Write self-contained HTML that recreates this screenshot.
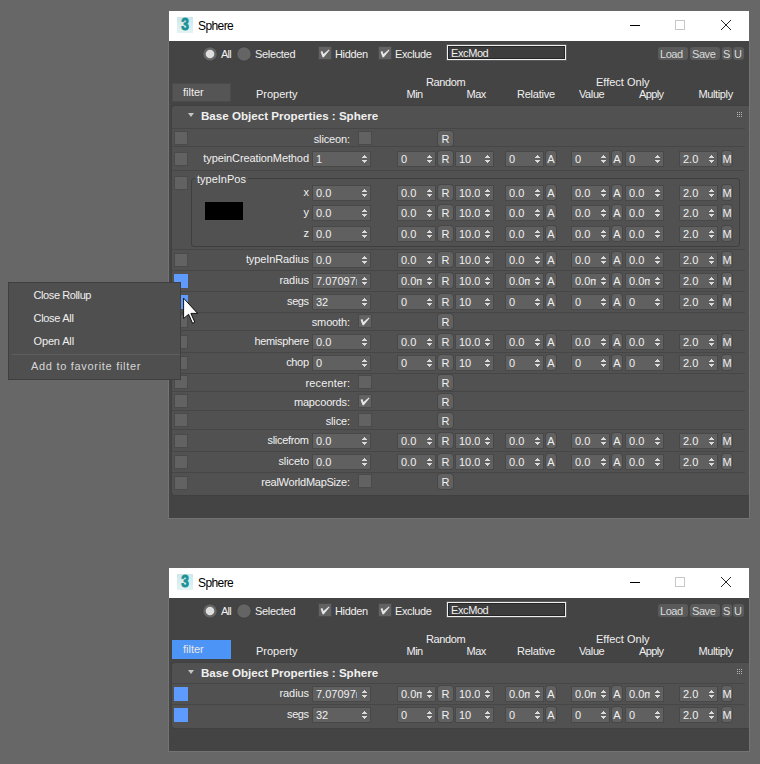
<!DOCTYPE html>
<html><head><meta charset="utf-8"><style>
html,body{margin:0;padding:0;}
body{width:760px;height:764px;overflow:hidden;background:#676767;position:relative;font-family:"Liberation Sans", sans-serif;}
body>div,body>svg{position:absolute;}
.t{white-space:nowrap;line-height:20px;height:20px;}
</style></head><body>
<div style="left:168px;top:41px;width:582px;height:478px;background:#737373"></div>
<div style="left:169px;top:11px;width:580px;height:30px;background:#fff"></div>
<div style="left:169px;top:41px;width:580px;height:477px;background:#444444"></div>
<svg style="left:177px;top:17px" width="16" height="16"><defs><linearGradient id="g0" x1="0" y1="0" x2="0" y2="1"><stop offset="0" stop-color="#cde8ea"/><stop offset="1" stop-color="#e4f3f4"/></linearGradient></defs><rect width="16" height="16" fill="url(#g0)"/><text x="0" y="0" transform="translate(8.1 12.7) scale(0.86 1)" font-family="Liberation Sans" font-weight="700" font-size="16" fill="#1b9197" stroke="#1b9197" stroke-width="0.9" text-anchor="middle">3</text></svg>
<div class="t" style="left:198px;top:15.84px;font-size:12px;color:#000;font-weight:400;;letter-spacing:-0.6px">Sphere</div>
<div style="left:630px;top:25px;width:10px;height:1px;background:#000"></div>
<div style="left:675px;top:20px;width:10px;height:10px;box-shadow:inset 0 0 0 1px #c8c8c8"></div>
<svg style="left:720px;top:19px" width="12" height="12"><path d="M1 1 L11 11 M11 1 L1 11" stroke="#000" stroke-width="0.85"/></svg>
<svg style="left:202px;top:46px" width="16" height="16"><circle cx="8" cy="8" r="7.5" fill="#3e3e3e"/><circle cx="8" cy="8" r="6.8" fill="#646464"/><circle cx="8" cy="8" r="4.3" fill="#dedede"/></svg>
<div class="t" style="left:221px;top:44.19px;font-size:11px;color:#f0f0f0;font-weight:400;;letter-spacing:-0.8px">All</div>
<svg style="left:236px;top:46px" width="16" height="16"><circle cx="8" cy="8" r="7.5" fill="#3e3e3e"/><circle cx="8" cy="8" r="6.8" fill="#646464"/></svg>
<div class="t" style="left:255px;top:44.19px;font-size:11px;color:#f0f0f0;font-weight:400;;letter-spacing:-0.33px">Selected</div>
<div style="left:319px;top:47px;width:12px;height:12px;background:#626262;box-shadow:0 0 0 1px #4a4a4a"></div>
<svg style="left:319px;top:47px" width="12" height="12"><path d="M1.6 4.8 L3.4 3.9 L4.5 7.0 L9.8 2.4 L10.5 3.2 L4.8 10.2 L3.5 10.3 Z" fill="#e6e6e6"/></svg>
<div class="t" style="left:335px;top:44.19px;font-size:11px;color:#f0f0f0;font-weight:400;;letter-spacing:-0.37px">Hidden</div>
<div style="left:379px;top:47px;width:12px;height:12px;background:#626262;box-shadow:0 0 0 1px #4a4a4a"></div>
<svg style="left:379px;top:47px" width="12" height="12"><path d="M1.6 4.8 L3.4 3.9 L4.5 7.0 L9.8 2.4 L10.5 3.2 L4.8 10.2 L3.5 10.3 Z" fill="#e6e6e6"/></svg>
<div class="t" style="left:395px;top:44.19px;font-size:11px;color:#f0f0f0;font-weight:400;;letter-spacing:-0.37px">Exclude</div>
<div style="left:446px;top:44px;width:121px;height:17px;background:#5a5a5a"></div>
<div style="left:447px;top:45px;width:119px;height:15px;background:#f0f0f0"></div>
<div style="left:448px;top:46px;width:117px;height:13px;background:#262626"></div>
<div style="left:449px;top:47px;width:115px;height:11px;background:#3d3d3d"></div>
<div class="t" style="left:451px;top:43.19px;font-size:11px;color:#f0f0f0;font-weight:400;;letter-spacing:-0.4px">ExcMod</div>
<div style="left:658px;top:47px;width:30px;height:13px;background:#5a5a5a;border-radius:3px"></div>
<div class="t" style="left:660px;top:44.19px;font-size:11px;color:#dadada;font-weight:400;;letter-spacing:-0.45px">Load</div>
<div style="left:690px;top:47px;width:30px;height:13px;background:#5a5a5a;border-radius:3px"></div>
<div class="t" style="left:692px;top:44.19px;font-size:11px;color:#dadada;font-weight:400;;letter-spacing:-0.43px">Save</div>
<div style="left:722px;top:47px;width:10px;height:13px;background:#5a5a5a;border-radius:3px"></div>
<div class="t" style="left:723px;top:44.19px;font-size:11px;color:#dadada;font-weight:400;">S</div>
<div style="left:733px;top:47px;width:11px;height:13px;background:#5a5a5a;border-radius:3px"></div>
<div class="t" style="left:734px;top:44.19px;font-size:11px;color:#dadada;font-weight:400;">U</div>
<div style="left:172px;top:83px;width:59px;height:19px;background:#555555;box-shadow:inset 0 0 0 1px #4b4b4b"></div>
<div class="t" style="left:183px;top:82.19px;font-size:11px;color:#f0f0f0;font-weight:400;">filter</div>
<div class="t" style="left:256px;top:84.19px;font-size:11px;color:#f0f0f0;font-weight:400;">Property</div>
<div class="t" style="left:426px;top:72.19px;font-size:11px;color:#f0f0f0;font-weight:400;;letter-spacing:-0.4px">Random</div>
<div class="t" style="left:406.5px;top:84.19px;font-size:11px;color:#f0f0f0;font-weight:400;;letter-spacing:-0.5px">Min</div>
<div class="t" style="left:466.5px;top:84.19px;font-size:11px;color:#f0f0f0;font-weight:400;;letter-spacing:-0.5px">Max</div>
<div class="t" style="left:517px;top:84.19px;font-size:11px;color:#f0f0f0;font-weight:400;;letter-spacing:-0.23px">Relative</div>
<div class="t" style="left:596px;top:72.19px;font-size:11px;color:#f0f0f0;font-weight:400;">Effect Only</div>
<div class="t" style="left:579px;top:84.19px;font-size:11px;color:#f0f0f0;font-weight:400;;letter-spacing:-0.4px">Value</div>
<div class="t" style="left:639px;top:84.19px;font-size:11px;color:#f0f0f0;font-weight:400;;letter-spacing:-0.6px">Apply</div>
<div class="t" style="left:698.5px;top:84.19px;font-size:11px;color:#f0f0f0;font-weight:400;;letter-spacing:-0.38px">Multiply</div>
<div style="left:171px;top:105px;width:578px;height:391px;background:#404040;border-radius:4px 0 0 4px"></div>
<div style="left:172px;top:106px;width:577px;height:389px;background:#515151;border-radius:3px 0 0 3px"></div>
<svg style="left:187px;top:112px" width="9" height="7"><path d="M1 1 L7 1 L4 5 Z" fill="#c4c4c4"/></svg>
<div class="t" style="left:201px;top:105.98px;font-size:11.6px;color:#f0f0f0;font-weight:700;">Base Object Properties : Sphere</div>
<div style="left:737px;top:112px;width:1px;height:1px;background:#b4b4b4"></div>
<div style="left:737px;top:114px;width:1px;height:1px;background:#b4b4b4"></div>
<div style="left:737px;top:116px;width:1px;height:1px;background:#b4b4b4"></div>
<div style="left:739px;top:112px;width:1px;height:1px;background:#b4b4b4"></div>
<div style="left:739px;top:114px;width:1px;height:1px;background:#b4b4b4"></div>
<div style="left:739px;top:116px;width:1px;height:1px;background:#b4b4b4"></div>
<div style="left:741px;top:112px;width:1px;height:1px;background:#b4b4b4"></div>
<div style="left:741px;top:114px;width:1px;height:1px;background:#b4b4b4"></div>
<div style="left:741px;top:116px;width:1px;height:1px;background:#b4b4b4"></div>
<div style="left:172px;top:128px;width:573px;height:1px;background:#464646"></div>
<div style="left:172px;top:146px;width:573px;height:1px;background:#464646"></div>
<div style="left:172px;top:170px;width:573px;height:1px;background:#464646"></div>
<div style="left:172px;top:249px;width:573px;height:1px;background:#464646"></div>
<div style="left:172px;top:270px;width:573px;height:1px;background:#464646"></div>
<div style="left:172px;top:291px;width:573px;height:1px;background:#464646"></div>
<div style="left:172px;top:312px;width:573px;height:1px;background:#464646"></div>
<div style="left:172px;top:330px;width:573px;height:1px;background:#464646"></div>
<div style="left:172px;top:352px;width:573px;height:1px;background:#464646"></div>
<div style="left:172px;top:373px;width:573px;height:1px;background:#464646"></div>
<div style="left:172px;top:391px;width:573px;height:1px;background:#464646"></div>
<div style="left:172px;top:410px;width:573px;height:1px;background:#464646"></div>
<div style="left:172px;top:429px;width:573px;height:1px;background:#464646"></div>
<div style="left:172px;top:451px;width:573px;height:1px;background:#464646"></div>
<div style="left:172px;top:472px;width:573px;height:1px;background:#464646"></div>
<div style="left:175px;top:132px;width:12px;height:12px;background:#626262;box-shadow:0 0 0 1px #4a4a4a"></div>
<div class="t" style="right:410.15px;top:129.19px;font-size:11px;color:#f0f0f0;font-weight:400;;letter-spacing:-0.15px">sliceon:</div>
<div style="left:359px;top:132px;width:12px;height:12px;background:#626262;box-shadow:0 0 0 1px #4a4a4a"></div>
<div style="left:438px;top:131px;width:15px;height:15px;background:#616161;border-radius:3px;box-shadow:0 0 0 1px #474747"></div>
<div class="t" style="left:438px;top:129.19px;font-size:11px;color:#f0f0f0;font-weight:400;width:15px;text-align:center;text-indent:0px">R</div>
<div style="left:175px;top:153px;width:12px;height:12px;background:#626262;box-shadow:0 0 0 1px #4a4a4a"></div>
<div class="t" style="right:451.1px;top:148.19px;font-size:11px;color:#f0f0f0;font-weight:400;;letter-spacing:-0.1px">typeinCreationMethod</div>
<div style="left:313px;top:152px;width:57px;height:14px;background:#606060;box-shadow:0 0 0 1px #484848"></div>
<div class="t" style="left:316px;top:149.19px;font-size:11px;color:#f0f0f0;font-weight:400;width:41px;overflow:hidden">1</div>
<svg style="left:362px;top:155px" width="5" height="8" shape-rendering="crispEdges"><rect x="2" y="0" width="1" height="1" fill="#dadada"/><rect x="1" y="1" width="3" height="1" fill="#dadada"/><rect x="0" y="2" width="5" height="1" fill="#dadada"/><rect x="0" y="5" width="5" height="1" fill="#dadada"/><rect x="1" y="6" width="3" height="1" fill="#dadada"/><rect x="2" y="7" width="1" height="1" fill="#dadada"/></svg>
<div style="left:398px;top:152px;width:37px;height:14px;background:#606060;box-shadow:0 0 0 1px #484848"></div>
<div class="t" style="left:401px;top:149.19px;font-size:11px;color:#f0f0f0;font-weight:400;width:21px;overflow:hidden">0</div>
<svg style="left:427px;top:155px" width="5" height="8" shape-rendering="crispEdges"><rect x="2" y="0" width="1" height="1" fill="#dadada"/><rect x="1" y="1" width="3" height="1" fill="#dadada"/><rect x="0" y="2" width="5" height="1" fill="#dadada"/><rect x="0" y="5" width="5" height="1" fill="#dadada"/><rect x="1" y="6" width="3" height="1" fill="#dadada"/><rect x="2" y="7" width="1" height="1" fill="#dadada"/></svg>
<div style="left:438px;top:151px;width:15px;height:15px;background:#616161;border-radius:3px;box-shadow:0 0 0 1px #474747"></div>
<div class="t" style="left:438px;top:149.19px;font-size:11px;color:#f0f0f0;font-weight:400;width:15px;text-align:center;text-indent:0px">R</div>
<div style="left:456px;top:152px;width:37px;height:14px;background:#606060;box-shadow:0 0 0 1px #484848"></div>
<div class="t" style="left:459px;top:149.19px;font-size:11px;color:#f0f0f0;font-weight:400;width:21px;overflow:hidden">10</div>
<svg style="left:485px;top:155px" width="5" height="8" shape-rendering="crispEdges"><rect x="2" y="0" width="1" height="1" fill="#dadada"/><rect x="1" y="1" width="3" height="1" fill="#dadada"/><rect x="0" y="2" width="5" height="1" fill="#dadada"/><rect x="0" y="5" width="5" height="1" fill="#dadada"/><rect x="1" y="6" width="3" height="1" fill="#dadada"/><rect x="2" y="7" width="1" height="1" fill="#dadada"/></svg>
<div style="left:506px;top:152px;width:37px;height:14px;background:#606060;box-shadow:0 0 0 1px #484848"></div>
<div class="t" style="left:509px;top:149.19px;font-size:11px;color:#f0f0f0;font-weight:400;width:21px;overflow:hidden">0</div>
<svg style="left:535px;top:155px" width="5" height="8" shape-rendering="crispEdges"><rect x="2" y="0" width="1" height="1" fill="#dadada"/><rect x="1" y="1" width="3" height="1" fill="#dadada"/><rect x="0" y="2" width="5" height="1" fill="#dadada"/><rect x="0" y="5" width="5" height="1" fill="#dadada"/><rect x="1" y="6" width="3" height="1" fill="#dadada"/><rect x="2" y="7" width="1" height="1" fill="#dadada"/></svg>
<div style="left:546px;top:151px;width:10px;height:15px;background:#616161;border-radius:3px;box-shadow:0 0 0 1px #474747"></div>
<div class="t" style="left:546px;top:149.19px;font-size:11px;color:#f0f0f0;font-weight:400;width:10px;text-align:center;text-indent:0px">A</div>
<div style="left:572px;top:152px;width:37px;height:14px;background:#606060;box-shadow:0 0 0 1px #484848"></div>
<div class="t" style="left:575px;top:149.19px;font-size:11px;color:#f0f0f0;font-weight:400;width:21px;overflow:hidden">0</div>
<svg style="left:601px;top:155px" width="5" height="8" shape-rendering="crispEdges"><rect x="2" y="0" width="1" height="1" fill="#dadada"/><rect x="1" y="1" width="3" height="1" fill="#dadada"/><rect x="0" y="2" width="5" height="1" fill="#dadada"/><rect x="0" y="5" width="5" height="1" fill="#dadada"/><rect x="1" y="6" width="3" height="1" fill="#dadada"/><rect x="2" y="7" width="1" height="1" fill="#dadada"/></svg>
<div style="left:612px;top:151px;width:10px;height:15px;background:#616161;border-radius:3px;box-shadow:0 0 0 1px #474747"></div>
<div class="t" style="left:612px;top:149.19px;font-size:11px;color:#f0f0f0;font-weight:400;width:10px;text-align:center;text-indent:0px">A</div>
<div style="left:626px;top:152px;width:37px;height:14px;background:#606060;box-shadow:0 0 0 1px #484848"></div>
<div class="t" style="left:629px;top:149.19px;font-size:11px;color:#f0f0f0;font-weight:400;width:21px;overflow:hidden">0</div>
<svg style="left:655px;top:155px" width="5" height="8" shape-rendering="crispEdges"><rect x="2" y="0" width="1" height="1" fill="#dadada"/><rect x="1" y="1" width="3" height="1" fill="#dadada"/><rect x="0" y="2" width="5" height="1" fill="#dadada"/><rect x="0" y="5" width="5" height="1" fill="#dadada"/><rect x="1" y="6" width="3" height="1" fill="#dadada"/><rect x="2" y="7" width="1" height="1" fill="#dadada"/></svg>
<div style="left:680px;top:152px;width:37px;height:14px;background:#606060;box-shadow:0 0 0 1px #484848"></div>
<div class="t" style="left:683px;top:149.19px;font-size:11px;color:#f0f0f0;font-weight:400;width:21px;overflow:hidden">2.0</div>
<svg style="left:709px;top:155px" width="5" height="8" shape-rendering="crispEdges"><rect x="2" y="0" width="1" height="1" fill="#dadada"/><rect x="1" y="1" width="3" height="1" fill="#dadada"/><rect x="0" y="2" width="5" height="1" fill="#dadada"/><rect x="0" y="5" width="5" height="1" fill="#dadada"/><rect x="1" y="6" width="3" height="1" fill="#dadada"/><rect x="2" y="7" width="1" height="1" fill="#dadada"/></svg>
<div style="left:722px;top:151px;width:10px;height:15px;background:#616161;border-radius:3px;box-shadow:0 0 0 1px #474747"></div>
<div class="t" style="left:722px;top:149.19px;font-size:11px;color:#f0f0f0;font-weight:400;width:10px;text-align:center;text-indent:0px">M</div>
<div style="left:175px;top:177px;width:12px;height:12px;background:#626262;box-shadow:0 0 0 1px #4a4a4a"></div>
<div style="left:191px;top:178px;width:549px;height:69px;border:1px solid #3e3e3e;border-radius:3px;box-sizing:border-box"></div>
<div style="left:195px;top:172px;width:53px;height:12px;background:#515151"></div>
<div class="t" style="left:197px;top:169.19px;font-size:11px;color:#f0f0f0;font-weight:400;">typeInPos</div>
<div style="left:205px;top:202px;width:38px;height:18px;background:#000"></div>
<div class="t" style="right:451.1px;top:182.19px;font-size:11px;color:#f0f0f0;font-weight:400;;letter-spacing:-0.1px">x</div>
<div style="left:313px;top:186px;width:57px;height:14px;background:#606060;box-shadow:0 0 0 1px #484848"></div>
<div class="t" style="left:316px;top:183.19px;font-size:11px;color:#f0f0f0;font-weight:400;width:41px;overflow:hidden">0.0</div>
<svg style="left:362px;top:189px" width="5" height="8" shape-rendering="crispEdges"><rect x="2" y="0" width="1" height="1" fill="#dadada"/><rect x="1" y="1" width="3" height="1" fill="#dadada"/><rect x="0" y="2" width="5" height="1" fill="#dadada"/><rect x="0" y="5" width="5" height="1" fill="#dadada"/><rect x="1" y="6" width="3" height="1" fill="#dadada"/><rect x="2" y="7" width="1" height="1" fill="#dadada"/></svg>
<div style="left:398px;top:186px;width:37px;height:14px;background:#606060;box-shadow:0 0 0 1px #484848"></div>
<div class="t" style="left:401px;top:183.19px;font-size:11px;color:#f0f0f0;font-weight:400;width:21px;overflow:hidden">0.0</div>
<svg style="left:427px;top:189px" width="5" height="8" shape-rendering="crispEdges"><rect x="2" y="0" width="1" height="1" fill="#dadada"/><rect x="1" y="1" width="3" height="1" fill="#dadada"/><rect x="0" y="2" width="5" height="1" fill="#dadada"/><rect x="0" y="5" width="5" height="1" fill="#dadada"/><rect x="1" y="6" width="3" height="1" fill="#dadada"/><rect x="2" y="7" width="1" height="1" fill="#dadada"/></svg>
<div style="left:438px;top:185px;width:15px;height:15px;background:#616161;border-radius:3px;box-shadow:0 0 0 1px #474747"></div>
<div class="t" style="left:438px;top:183.19px;font-size:11px;color:#f0f0f0;font-weight:400;width:15px;text-align:center;text-indent:0px">R</div>
<div style="left:456px;top:186px;width:37px;height:14px;background:#606060;box-shadow:0 0 0 1px #484848"></div>
<div class="t" style="left:459px;top:183.19px;font-size:11px;color:#f0f0f0;font-weight:400;width:21px;overflow:hidden">10.0</div>
<svg style="left:485px;top:189px" width="5" height="8" shape-rendering="crispEdges"><rect x="2" y="0" width="1" height="1" fill="#dadada"/><rect x="1" y="1" width="3" height="1" fill="#dadada"/><rect x="0" y="2" width="5" height="1" fill="#dadada"/><rect x="0" y="5" width="5" height="1" fill="#dadada"/><rect x="1" y="6" width="3" height="1" fill="#dadada"/><rect x="2" y="7" width="1" height="1" fill="#dadada"/></svg>
<div style="left:506px;top:186px;width:37px;height:14px;background:#606060;box-shadow:0 0 0 1px #484848"></div>
<div class="t" style="left:509px;top:183.19px;font-size:11px;color:#f0f0f0;font-weight:400;width:21px;overflow:hidden">0.0</div>
<svg style="left:535px;top:189px" width="5" height="8" shape-rendering="crispEdges"><rect x="2" y="0" width="1" height="1" fill="#dadada"/><rect x="1" y="1" width="3" height="1" fill="#dadada"/><rect x="0" y="2" width="5" height="1" fill="#dadada"/><rect x="0" y="5" width="5" height="1" fill="#dadada"/><rect x="1" y="6" width="3" height="1" fill="#dadada"/><rect x="2" y="7" width="1" height="1" fill="#dadada"/></svg>
<div style="left:546px;top:185px;width:10px;height:15px;background:#616161;border-radius:3px;box-shadow:0 0 0 1px #474747"></div>
<div class="t" style="left:546px;top:183.19px;font-size:11px;color:#f0f0f0;font-weight:400;width:10px;text-align:center;text-indent:0px">A</div>
<div style="left:572px;top:186px;width:37px;height:14px;background:#606060;box-shadow:0 0 0 1px #484848"></div>
<div class="t" style="left:575px;top:183.19px;font-size:11px;color:#f0f0f0;font-weight:400;width:21px;overflow:hidden">0.0</div>
<svg style="left:601px;top:189px" width="5" height="8" shape-rendering="crispEdges"><rect x="2" y="0" width="1" height="1" fill="#dadada"/><rect x="1" y="1" width="3" height="1" fill="#dadada"/><rect x="0" y="2" width="5" height="1" fill="#dadada"/><rect x="0" y="5" width="5" height="1" fill="#dadada"/><rect x="1" y="6" width="3" height="1" fill="#dadada"/><rect x="2" y="7" width="1" height="1" fill="#dadada"/></svg>
<div style="left:612px;top:185px;width:10px;height:15px;background:#616161;border-radius:3px;box-shadow:0 0 0 1px #474747"></div>
<div class="t" style="left:612px;top:183.19px;font-size:11px;color:#f0f0f0;font-weight:400;width:10px;text-align:center;text-indent:0px">A</div>
<div style="left:626px;top:186px;width:37px;height:14px;background:#606060;box-shadow:0 0 0 1px #484848"></div>
<div class="t" style="left:629px;top:183.19px;font-size:11px;color:#f0f0f0;font-weight:400;width:21px;overflow:hidden">0.0</div>
<svg style="left:655px;top:189px" width="5" height="8" shape-rendering="crispEdges"><rect x="2" y="0" width="1" height="1" fill="#dadada"/><rect x="1" y="1" width="3" height="1" fill="#dadada"/><rect x="0" y="2" width="5" height="1" fill="#dadada"/><rect x="0" y="5" width="5" height="1" fill="#dadada"/><rect x="1" y="6" width="3" height="1" fill="#dadada"/><rect x="2" y="7" width="1" height="1" fill="#dadada"/></svg>
<div style="left:680px;top:186px;width:37px;height:14px;background:#606060;box-shadow:0 0 0 1px #484848"></div>
<div class="t" style="left:683px;top:183.19px;font-size:11px;color:#f0f0f0;font-weight:400;width:21px;overflow:hidden">2.0</div>
<svg style="left:709px;top:189px" width="5" height="8" shape-rendering="crispEdges"><rect x="2" y="0" width="1" height="1" fill="#dadada"/><rect x="1" y="1" width="3" height="1" fill="#dadada"/><rect x="0" y="2" width="5" height="1" fill="#dadada"/><rect x="0" y="5" width="5" height="1" fill="#dadada"/><rect x="1" y="6" width="3" height="1" fill="#dadada"/><rect x="2" y="7" width="1" height="1" fill="#dadada"/></svg>
<div style="left:722px;top:185px;width:10px;height:15px;background:#616161;border-radius:3px;box-shadow:0 0 0 1px #474747"></div>
<div class="t" style="left:722px;top:183.19px;font-size:11px;color:#f0f0f0;font-weight:400;width:10px;text-align:center;text-indent:0px">M</div>
<div class="t" style="right:451.1px;top:202.19px;font-size:11px;color:#f0f0f0;font-weight:400;;letter-spacing:-0.1px">y</div>
<div style="left:313px;top:206px;width:57px;height:14px;background:#606060;box-shadow:0 0 0 1px #484848"></div>
<div class="t" style="left:316px;top:203.19px;font-size:11px;color:#f0f0f0;font-weight:400;width:41px;overflow:hidden">0.0</div>
<svg style="left:362px;top:209px" width="5" height="8" shape-rendering="crispEdges"><rect x="2" y="0" width="1" height="1" fill="#dadada"/><rect x="1" y="1" width="3" height="1" fill="#dadada"/><rect x="0" y="2" width="5" height="1" fill="#dadada"/><rect x="0" y="5" width="5" height="1" fill="#dadada"/><rect x="1" y="6" width="3" height="1" fill="#dadada"/><rect x="2" y="7" width="1" height="1" fill="#dadada"/></svg>
<div style="left:398px;top:206px;width:37px;height:14px;background:#606060;box-shadow:0 0 0 1px #484848"></div>
<div class="t" style="left:401px;top:203.19px;font-size:11px;color:#f0f0f0;font-weight:400;width:21px;overflow:hidden">0.0</div>
<svg style="left:427px;top:209px" width="5" height="8" shape-rendering="crispEdges"><rect x="2" y="0" width="1" height="1" fill="#dadada"/><rect x="1" y="1" width="3" height="1" fill="#dadada"/><rect x="0" y="2" width="5" height="1" fill="#dadada"/><rect x="0" y="5" width="5" height="1" fill="#dadada"/><rect x="1" y="6" width="3" height="1" fill="#dadada"/><rect x="2" y="7" width="1" height="1" fill="#dadada"/></svg>
<div style="left:438px;top:205px;width:15px;height:15px;background:#616161;border-radius:3px;box-shadow:0 0 0 1px #474747"></div>
<div class="t" style="left:438px;top:203.19px;font-size:11px;color:#f0f0f0;font-weight:400;width:15px;text-align:center;text-indent:0px">R</div>
<div style="left:456px;top:206px;width:37px;height:14px;background:#606060;box-shadow:0 0 0 1px #484848"></div>
<div class="t" style="left:459px;top:203.19px;font-size:11px;color:#f0f0f0;font-weight:400;width:21px;overflow:hidden">10.0</div>
<svg style="left:485px;top:209px" width="5" height="8" shape-rendering="crispEdges"><rect x="2" y="0" width="1" height="1" fill="#dadada"/><rect x="1" y="1" width="3" height="1" fill="#dadada"/><rect x="0" y="2" width="5" height="1" fill="#dadada"/><rect x="0" y="5" width="5" height="1" fill="#dadada"/><rect x="1" y="6" width="3" height="1" fill="#dadada"/><rect x="2" y="7" width="1" height="1" fill="#dadada"/></svg>
<div style="left:506px;top:206px;width:37px;height:14px;background:#606060;box-shadow:0 0 0 1px #484848"></div>
<div class="t" style="left:509px;top:203.19px;font-size:11px;color:#f0f0f0;font-weight:400;width:21px;overflow:hidden">0.0</div>
<svg style="left:535px;top:209px" width="5" height="8" shape-rendering="crispEdges"><rect x="2" y="0" width="1" height="1" fill="#dadada"/><rect x="1" y="1" width="3" height="1" fill="#dadada"/><rect x="0" y="2" width="5" height="1" fill="#dadada"/><rect x="0" y="5" width="5" height="1" fill="#dadada"/><rect x="1" y="6" width="3" height="1" fill="#dadada"/><rect x="2" y="7" width="1" height="1" fill="#dadada"/></svg>
<div style="left:546px;top:205px;width:10px;height:15px;background:#616161;border-radius:3px;box-shadow:0 0 0 1px #474747"></div>
<div class="t" style="left:546px;top:203.19px;font-size:11px;color:#f0f0f0;font-weight:400;width:10px;text-align:center;text-indent:0px">A</div>
<div style="left:572px;top:206px;width:37px;height:14px;background:#606060;box-shadow:0 0 0 1px #484848"></div>
<div class="t" style="left:575px;top:203.19px;font-size:11px;color:#f0f0f0;font-weight:400;width:21px;overflow:hidden">0.0</div>
<svg style="left:601px;top:209px" width="5" height="8" shape-rendering="crispEdges"><rect x="2" y="0" width="1" height="1" fill="#dadada"/><rect x="1" y="1" width="3" height="1" fill="#dadada"/><rect x="0" y="2" width="5" height="1" fill="#dadada"/><rect x="0" y="5" width="5" height="1" fill="#dadada"/><rect x="1" y="6" width="3" height="1" fill="#dadada"/><rect x="2" y="7" width="1" height="1" fill="#dadada"/></svg>
<div style="left:612px;top:205px;width:10px;height:15px;background:#616161;border-radius:3px;box-shadow:0 0 0 1px #474747"></div>
<div class="t" style="left:612px;top:203.19px;font-size:11px;color:#f0f0f0;font-weight:400;width:10px;text-align:center;text-indent:0px">A</div>
<div style="left:626px;top:206px;width:37px;height:14px;background:#606060;box-shadow:0 0 0 1px #484848"></div>
<div class="t" style="left:629px;top:203.19px;font-size:11px;color:#f0f0f0;font-weight:400;width:21px;overflow:hidden">0.0</div>
<svg style="left:655px;top:209px" width="5" height="8" shape-rendering="crispEdges"><rect x="2" y="0" width="1" height="1" fill="#dadada"/><rect x="1" y="1" width="3" height="1" fill="#dadada"/><rect x="0" y="2" width="5" height="1" fill="#dadada"/><rect x="0" y="5" width="5" height="1" fill="#dadada"/><rect x="1" y="6" width="3" height="1" fill="#dadada"/><rect x="2" y="7" width="1" height="1" fill="#dadada"/></svg>
<div style="left:680px;top:206px;width:37px;height:14px;background:#606060;box-shadow:0 0 0 1px #484848"></div>
<div class="t" style="left:683px;top:203.19px;font-size:11px;color:#f0f0f0;font-weight:400;width:21px;overflow:hidden">2.0</div>
<svg style="left:709px;top:209px" width="5" height="8" shape-rendering="crispEdges"><rect x="2" y="0" width="1" height="1" fill="#dadada"/><rect x="1" y="1" width="3" height="1" fill="#dadada"/><rect x="0" y="2" width="5" height="1" fill="#dadada"/><rect x="0" y="5" width="5" height="1" fill="#dadada"/><rect x="1" y="6" width="3" height="1" fill="#dadada"/><rect x="2" y="7" width="1" height="1" fill="#dadada"/></svg>
<div style="left:722px;top:205px;width:10px;height:15px;background:#616161;border-radius:3px;box-shadow:0 0 0 1px #474747"></div>
<div class="t" style="left:722px;top:203.19px;font-size:11px;color:#f0f0f0;font-weight:400;width:10px;text-align:center;text-indent:0px">M</div>
<div class="t" style="right:451.1px;top:223.19px;font-size:11px;color:#f0f0f0;font-weight:400;;letter-spacing:-0.1px">z</div>
<div style="left:313px;top:227px;width:57px;height:14px;background:#606060;box-shadow:0 0 0 1px #484848"></div>
<div class="t" style="left:316px;top:224.19px;font-size:11px;color:#f0f0f0;font-weight:400;width:41px;overflow:hidden">0.0</div>
<svg style="left:362px;top:230px" width="5" height="8" shape-rendering="crispEdges"><rect x="2" y="0" width="1" height="1" fill="#dadada"/><rect x="1" y="1" width="3" height="1" fill="#dadada"/><rect x="0" y="2" width="5" height="1" fill="#dadada"/><rect x="0" y="5" width="5" height="1" fill="#dadada"/><rect x="1" y="6" width="3" height="1" fill="#dadada"/><rect x="2" y="7" width="1" height="1" fill="#dadada"/></svg>
<div style="left:398px;top:227px;width:37px;height:14px;background:#606060;box-shadow:0 0 0 1px #484848"></div>
<div class="t" style="left:401px;top:224.19px;font-size:11px;color:#f0f0f0;font-weight:400;width:21px;overflow:hidden">0.0</div>
<svg style="left:427px;top:230px" width="5" height="8" shape-rendering="crispEdges"><rect x="2" y="0" width="1" height="1" fill="#dadada"/><rect x="1" y="1" width="3" height="1" fill="#dadada"/><rect x="0" y="2" width="5" height="1" fill="#dadada"/><rect x="0" y="5" width="5" height="1" fill="#dadada"/><rect x="1" y="6" width="3" height="1" fill="#dadada"/><rect x="2" y="7" width="1" height="1" fill="#dadada"/></svg>
<div style="left:438px;top:226px;width:15px;height:15px;background:#616161;border-radius:3px;box-shadow:0 0 0 1px #474747"></div>
<div class="t" style="left:438px;top:224.19px;font-size:11px;color:#f0f0f0;font-weight:400;width:15px;text-align:center;text-indent:0px">R</div>
<div style="left:456px;top:227px;width:37px;height:14px;background:#606060;box-shadow:0 0 0 1px #484848"></div>
<div class="t" style="left:459px;top:224.19px;font-size:11px;color:#f0f0f0;font-weight:400;width:21px;overflow:hidden">10.0</div>
<svg style="left:485px;top:230px" width="5" height="8" shape-rendering="crispEdges"><rect x="2" y="0" width="1" height="1" fill="#dadada"/><rect x="1" y="1" width="3" height="1" fill="#dadada"/><rect x="0" y="2" width="5" height="1" fill="#dadada"/><rect x="0" y="5" width="5" height="1" fill="#dadada"/><rect x="1" y="6" width="3" height="1" fill="#dadada"/><rect x="2" y="7" width="1" height="1" fill="#dadada"/></svg>
<div style="left:506px;top:227px;width:37px;height:14px;background:#606060;box-shadow:0 0 0 1px #484848"></div>
<div class="t" style="left:509px;top:224.19px;font-size:11px;color:#f0f0f0;font-weight:400;width:21px;overflow:hidden">0.0</div>
<svg style="left:535px;top:230px" width="5" height="8" shape-rendering="crispEdges"><rect x="2" y="0" width="1" height="1" fill="#dadada"/><rect x="1" y="1" width="3" height="1" fill="#dadada"/><rect x="0" y="2" width="5" height="1" fill="#dadada"/><rect x="0" y="5" width="5" height="1" fill="#dadada"/><rect x="1" y="6" width="3" height="1" fill="#dadada"/><rect x="2" y="7" width="1" height="1" fill="#dadada"/></svg>
<div style="left:546px;top:226px;width:10px;height:15px;background:#616161;border-radius:3px;box-shadow:0 0 0 1px #474747"></div>
<div class="t" style="left:546px;top:224.19px;font-size:11px;color:#f0f0f0;font-weight:400;width:10px;text-align:center;text-indent:0px">A</div>
<div style="left:572px;top:227px;width:37px;height:14px;background:#606060;box-shadow:0 0 0 1px #484848"></div>
<div class="t" style="left:575px;top:224.19px;font-size:11px;color:#f0f0f0;font-weight:400;width:21px;overflow:hidden">0.0</div>
<svg style="left:601px;top:230px" width="5" height="8" shape-rendering="crispEdges"><rect x="2" y="0" width="1" height="1" fill="#dadada"/><rect x="1" y="1" width="3" height="1" fill="#dadada"/><rect x="0" y="2" width="5" height="1" fill="#dadada"/><rect x="0" y="5" width="5" height="1" fill="#dadada"/><rect x="1" y="6" width="3" height="1" fill="#dadada"/><rect x="2" y="7" width="1" height="1" fill="#dadada"/></svg>
<div style="left:612px;top:226px;width:10px;height:15px;background:#616161;border-radius:3px;box-shadow:0 0 0 1px #474747"></div>
<div class="t" style="left:612px;top:224.19px;font-size:11px;color:#f0f0f0;font-weight:400;width:10px;text-align:center;text-indent:0px">A</div>
<div style="left:626px;top:227px;width:37px;height:14px;background:#606060;box-shadow:0 0 0 1px #484848"></div>
<div class="t" style="left:629px;top:224.19px;font-size:11px;color:#f0f0f0;font-weight:400;width:21px;overflow:hidden">0.0</div>
<svg style="left:655px;top:230px" width="5" height="8" shape-rendering="crispEdges"><rect x="2" y="0" width="1" height="1" fill="#dadada"/><rect x="1" y="1" width="3" height="1" fill="#dadada"/><rect x="0" y="2" width="5" height="1" fill="#dadada"/><rect x="0" y="5" width="5" height="1" fill="#dadada"/><rect x="1" y="6" width="3" height="1" fill="#dadada"/><rect x="2" y="7" width="1" height="1" fill="#dadada"/></svg>
<div style="left:680px;top:227px;width:37px;height:14px;background:#606060;box-shadow:0 0 0 1px #484848"></div>
<div class="t" style="left:683px;top:224.19px;font-size:11px;color:#f0f0f0;font-weight:400;width:21px;overflow:hidden">2.0</div>
<svg style="left:709px;top:230px" width="5" height="8" shape-rendering="crispEdges"><rect x="2" y="0" width="1" height="1" fill="#dadada"/><rect x="1" y="1" width="3" height="1" fill="#dadada"/><rect x="0" y="2" width="5" height="1" fill="#dadada"/><rect x="0" y="5" width="5" height="1" fill="#dadada"/><rect x="1" y="6" width="3" height="1" fill="#dadada"/><rect x="2" y="7" width="1" height="1" fill="#dadada"/></svg>
<div style="left:722px;top:226px;width:10px;height:15px;background:#616161;border-radius:3px;box-shadow:0 0 0 1px #474747"></div>
<div class="t" style="left:722px;top:224.19px;font-size:11px;color:#f0f0f0;font-weight:400;width:10px;text-align:center;text-indent:0px">M</div>
<div style="left:175px;top:254px;width:12px;height:12px;background:#626262;box-shadow:0 0 0 1px #4a4a4a"></div>
<div class="t" style="right:451.1px;top:249.19px;font-size:11px;color:#f0f0f0;font-weight:400;;letter-spacing:-0.1px">typeInRadius</div>
<div style="left:313px;top:253px;width:57px;height:14px;background:#606060;box-shadow:0 0 0 1px #484848"></div>
<div class="t" style="left:316px;top:250.19px;font-size:11px;color:#f0f0f0;font-weight:400;width:41px;overflow:hidden">0.0</div>
<svg style="left:362px;top:256px" width="5" height="8" shape-rendering="crispEdges"><rect x="2" y="0" width="1" height="1" fill="#dadada"/><rect x="1" y="1" width="3" height="1" fill="#dadada"/><rect x="0" y="2" width="5" height="1" fill="#dadada"/><rect x="0" y="5" width="5" height="1" fill="#dadada"/><rect x="1" y="6" width="3" height="1" fill="#dadada"/><rect x="2" y="7" width="1" height="1" fill="#dadada"/></svg>
<div style="left:398px;top:253px;width:37px;height:14px;background:#606060;box-shadow:0 0 0 1px #484848"></div>
<div class="t" style="left:401px;top:250.19px;font-size:11px;color:#f0f0f0;font-weight:400;width:21px;overflow:hidden">0.0</div>
<svg style="left:427px;top:256px" width="5" height="8" shape-rendering="crispEdges"><rect x="2" y="0" width="1" height="1" fill="#dadada"/><rect x="1" y="1" width="3" height="1" fill="#dadada"/><rect x="0" y="2" width="5" height="1" fill="#dadada"/><rect x="0" y="5" width="5" height="1" fill="#dadada"/><rect x="1" y="6" width="3" height="1" fill="#dadada"/><rect x="2" y="7" width="1" height="1" fill="#dadada"/></svg>
<div style="left:438px;top:252px;width:15px;height:15px;background:#616161;border-radius:3px;box-shadow:0 0 0 1px #474747"></div>
<div class="t" style="left:438px;top:250.19px;font-size:11px;color:#f0f0f0;font-weight:400;width:15px;text-align:center;text-indent:0px">R</div>
<div style="left:456px;top:253px;width:37px;height:14px;background:#606060;box-shadow:0 0 0 1px #484848"></div>
<div class="t" style="left:459px;top:250.19px;font-size:11px;color:#f0f0f0;font-weight:400;width:21px;overflow:hidden">10.0</div>
<svg style="left:485px;top:256px" width="5" height="8" shape-rendering="crispEdges"><rect x="2" y="0" width="1" height="1" fill="#dadada"/><rect x="1" y="1" width="3" height="1" fill="#dadada"/><rect x="0" y="2" width="5" height="1" fill="#dadada"/><rect x="0" y="5" width="5" height="1" fill="#dadada"/><rect x="1" y="6" width="3" height="1" fill="#dadada"/><rect x="2" y="7" width="1" height="1" fill="#dadada"/></svg>
<div style="left:506px;top:253px;width:37px;height:14px;background:#606060;box-shadow:0 0 0 1px #484848"></div>
<div class="t" style="left:509px;top:250.19px;font-size:11px;color:#f0f0f0;font-weight:400;width:21px;overflow:hidden">0.0</div>
<svg style="left:535px;top:256px" width="5" height="8" shape-rendering="crispEdges"><rect x="2" y="0" width="1" height="1" fill="#dadada"/><rect x="1" y="1" width="3" height="1" fill="#dadada"/><rect x="0" y="2" width="5" height="1" fill="#dadada"/><rect x="0" y="5" width="5" height="1" fill="#dadada"/><rect x="1" y="6" width="3" height="1" fill="#dadada"/><rect x="2" y="7" width="1" height="1" fill="#dadada"/></svg>
<div style="left:546px;top:252px;width:10px;height:15px;background:#616161;border-radius:3px;box-shadow:0 0 0 1px #474747"></div>
<div class="t" style="left:546px;top:250.19px;font-size:11px;color:#f0f0f0;font-weight:400;width:10px;text-align:center;text-indent:0px">A</div>
<div style="left:572px;top:253px;width:37px;height:14px;background:#606060;box-shadow:0 0 0 1px #484848"></div>
<div class="t" style="left:575px;top:250.19px;font-size:11px;color:#f0f0f0;font-weight:400;width:21px;overflow:hidden">0.0</div>
<svg style="left:601px;top:256px" width="5" height="8" shape-rendering="crispEdges"><rect x="2" y="0" width="1" height="1" fill="#dadada"/><rect x="1" y="1" width="3" height="1" fill="#dadada"/><rect x="0" y="2" width="5" height="1" fill="#dadada"/><rect x="0" y="5" width="5" height="1" fill="#dadada"/><rect x="1" y="6" width="3" height="1" fill="#dadada"/><rect x="2" y="7" width="1" height="1" fill="#dadada"/></svg>
<div style="left:612px;top:252px;width:10px;height:15px;background:#616161;border-radius:3px;box-shadow:0 0 0 1px #474747"></div>
<div class="t" style="left:612px;top:250.19px;font-size:11px;color:#f0f0f0;font-weight:400;width:10px;text-align:center;text-indent:0px">A</div>
<div style="left:626px;top:253px;width:37px;height:14px;background:#606060;box-shadow:0 0 0 1px #484848"></div>
<div class="t" style="left:629px;top:250.19px;font-size:11px;color:#f0f0f0;font-weight:400;width:21px;overflow:hidden">0.0</div>
<svg style="left:655px;top:256px" width="5" height="8" shape-rendering="crispEdges"><rect x="2" y="0" width="1" height="1" fill="#dadada"/><rect x="1" y="1" width="3" height="1" fill="#dadada"/><rect x="0" y="2" width="5" height="1" fill="#dadada"/><rect x="0" y="5" width="5" height="1" fill="#dadada"/><rect x="1" y="6" width="3" height="1" fill="#dadada"/><rect x="2" y="7" width="1" height="1" fill="#dadada"/></svg>
<div style="left:680px;top:253px;width:37px;height:14px;background:#606060;box-shadow:0 0 0 1px #484848"></div>
<div class="t" style="left:683px;top:250.19px;font-size:11px;color:#f0f0f0;font-weight:400;width:21px;overflow:hidden">2.0</div>
<svg style="left:709px;top:256px" width="5" height="8" shape-rendering="crispEdges"><rect x="2" y="0" width="1" height="1" fill="#dadada"/><rect x="1" y="1" width="3" height="1" fill="#dadada"/><rect x="0" y="2" width="5" height="1" fill="#dadada"/><rect x="0" y="5" width="5" height="1" fill="#dadada"/><rect x="1" y="6" width="3" height="1" fill="#dadada"/><rect x="2" y="7" width="1" height="1" fill="#dadada"/></svg>
<div style="left:722px;top:252px;width:10px;height:15px;background:#616161;border-radius:3px;box-shadow:0 0 0 1px #474747"></div>
<div class="t" style="left:722px;top:250.19px;font-size:11px;color:#f0f0f0;font-weight:400;width:10px;text-align:center;text-indent:0px">M</div>
<div style="left:174px;top:274px;width:14px;height:14px;background:#5f9bff"></div>
<div class="t" style="right:451.1px;top:270.19px;font-size:11px;color:#f0f0f0;font-weight:400;;letter-spacing:-0.1px">radius</div>
<div style="left:313px;top:274px;width:57px;height:14px;background:#606060;box-shadow:0 0 0 1px #484848"></div>
<div class="t" style="left:316px;top:271.19px;font-size:11px;color:#f0f0f0;font-weight:400;width:41px;overflow:hidden">7.07097m</div>
<svg style="left:362px;top:277px" width="5" height="8" shape-rendering="crispEdges"><rect x="2" y="0" width="1" height="1" fill="#dadada"/><rect x="1" y="1" width="3" height="1" fill="#dadada"/><rect x="0" y="2" width="5" height="1" fill="#dadada"/><rect x="0" y="5" width="5" height="1" fill="#dadada"/><rect x="1" y="6" width="3" height="1" fill="#dadada"/><rect x="2" y="7" width="1" height="1" fill="#dadada"/></svg>
<div style="left:398px;top:274px;width:37px;height:14px;background:#606060;box-shadow:0 0 0 1px #484848"></div>
<div class="t" style="left:401px;top:271.19px;font-size:11px;color:#f0f0f0;font-weight:400;width:21px;overflow:hidden">0.0m</div>
<svg style="left:427px;top:277px" width="5" height="8" shape-rendering="crispEdges"><rect x="2" y="0" width="1" height="1" fill="#dadada"/><rect x="1" y="1" width="3" height="1" fill="#dadada"/><rect x="0" y="2" width="5" height="1" fill="#dadada"/><rect x="0" y="5" width="5" height="1" fill="#dadada"/><rect x="1" y="6" width="3" height="1" fill="#dadada"/><rect x="2" y="7" width="1" height="1" fill="#dadada"/></svg>
<div style="left:438px;top:273px;width:15px;height:15px;background:#616161;border-radius:3px;box-shadow:0 0 0 1px #474747"></div>
<div class="t" style="left:438px;top:271.19px;font-size:11px;color:#f0f0f0;font-weight:400;width:15px;text-align:center;text-indent:0px">R</div>
<div style="left:456px;top:274px;width:37px;height:14px;background:#606060;box-shadow:0 0 0 1px #484848"></div>
<div class="t" style="left:459px;top:271.19px;font-size:11px;color:#f0f0f0;font-weight:400;width:21px;overflow:hidden">10.0</div>
<svg style="left:485px;top:277px" width="5" height="8" shape-rendering="crispEdges"><rect x="2" y="0" width="1" height="1" fill="#dadada"/><rect x="1" y="1" width="3" height="1" fill="#dadada"/><rect x="0" y="2" width="5" height="1" fill="#dadada"/><rect x="0" y="5" width="5" height="1" fill="#dadada"/><rect x="1" y="6" width="3" height="1" fill="#dadada"/><rect x="2" y="7" width="1" height="1" fill="#dadada"/></svg>
<div style="left:506px;top:274px;width:37px;height:14px;background:#606060;box-shadow:0 0 0 1px #484848"></div>
<div class="t" style="left:509px;top:271.19px;font-size:11px;color:#f0f0f0;font-weight:400;width:21px;overflow:hidden">0.0m</div>
<svg style="left:535px;top:277px" width="5" height="8" shape-rendering="crispEdges"><rect x="2" y="0" width="1" height="1" fill="#dadada"/><rect x="1" y="1" width="3" height="1" fill="#dadada"/><rect x="0" y="2" width="5" height="1" fill="#dadada"/><rect x="0" y="5" width="5" height="1" fill="#dadada"/><rect x="1" y="6" width="3" height="1" fill="#dadada"/><rect x="2" y="7" width="1" height="1" fill="#dadada"/></svg>
<div style="left:546px;top:273px;width:10px;height:15px;background:#616161;border-radius:3px;box-shadow:0 0 0 1px #474747"></div>
<div class="t" style="left:546px;top:271.19px;font-size:11px;color:#f0f0f0;font-weight:400;width:10px;text-align:center;text-indent:0px">A</div>
<div style="left:572px;top:274px;width:37px;height:14px;background:#606060;box-shadow:0 0 0 1px #484848"></div>
<div class="t" style="left:575px;top:271.19px;font-size:11px;color:#f0f0f0;font-weight:400;width:21px;overflow:hidden">0.0m</div>
<svg style="left:601px;top:277px" width="5" height="8" shape-rendering="crispEdges"><rect x="2" y="0" width="1" height="1" fill="#dadada"/><rect x="1" y="1" width="3" height="1" fill="#dadada"/><rect x="0" y="2" width="5" height="1" fill="#dadada"/><rect x="0" y="5" width="5" height="1" fill="#dadada"/><rect x="1" y="6" width="3" height="1" fill="#dadada"/><rect x="2" y="7" width="1" height="1" fill="#dadada"/></svg>
<div style="left:612px;top:273px;width:10px;height:15px;background:#616161;border-radius:3px;box-shadow:0 0 0 1px #474747"></div>
<div class="t" style="left:612px;top:271.19px;font-size:11px;color:#f0f0f0;font-weight:400;width:10px;text-align:center;text-indent:0px">A</div>
<div style="left:626px;top:274px;width:37px;height:14px;background:#606060;box-shadow:0 0 0 1px #484848"></div>
<div class="t" style="left:629px;top:271.19px;font-size:11px;color:#f0f0f0;font-weight:400;width:21px;overflow:hidden">0.0m</div>
<svg style="left:655px;top:277px" width="5" height="8" shape-rendering="crispEdges"><rect x="2" y="0" width="1" height="1" fill="#dadada"/><rect x="1" y="1" width="3" height="1" fill="#dadada"/><rect x="0" y="2" width="5" height="1" fill="#dadada"/><rect x="0" y="5" width="5" height="1" fill="#dadada"/><rect x="1" y="6" width="3" height="1" fill="#dadada"/><rect x="2" y="7" width="1" height="1" fill="#dadada"/></svg>
<div style="left:680px;top:274px;width:37px;height:14px;background:#606060;box-shadow:0 0 0 1px #484848"></div>
<div class="t" style="left:683px;top:271.19px;font-size:11px;color:#f0f0f0;font-weight:400;width:21px;overflow:hidden">2.0</div>
<svg style="left:709px;top:277px" width="5" height="8" shape-rendering="crispEdges"><rect x="2" y="0" width="1" height="1" fill="#dadada"/><rect x="1" y="1" width="3" height="1" fill="#dadada"/><rect x="0" y="2" width="5" height="1" fill="#dadada"/><rect x="0" y="5" width="5" height="1" fill="#dadada"/><rect x="1" y="6" width="3" height="1" fill="#dadada"/><rect x="2" y="7" width="1" height="1" fill="#dadada"/></svg>
<div style="left:722px;top:273px;width:10px;height:15px;background:#616161;border-radius:3px;box-shadow:0 0 0 1px #474747"></div>
<div class="t" style="left:722px;top:271.19px;font-size:11px;color:#f0f0f0;font-weight:400;width:10px;text-align:center;text-indent:0px">M</div>
<div style="left:174px;top:295px;width:14px;height:14px;background:#5f9bff"></div>
<div class="t" style="right:451.43px;top:291.19px;font-size:11px;color:#f0f0f0;font-weight:400;;letter-spacing:-0.43px">segs</div>
<div style="left:313px;top:295px;width:57px;height:14px;background:#606060;box-shadow:0 0 0 1px #484848"></div>
<div class="t" style="left:316px;top:292.19px;font-size:11px;color:#f0f0f0;font-weight:400;width:41px;overflow:hidden">32</div>
<svg style="left:362px;top:298px" width="5" height="8" shape-rendering="crispEdges"><rect x="2" y="0" width="1" height="1" fill="#dadada"/><rect x="1" y="1" width="3" height="1" fill="#dadada"/><rect x="0" y="2" width="5" height="1" fill="#dadada"/><rect x="0" y="5" width="5" height="1" fill="#dadada"/><rect x="1" y="6" width="3" height="1" fill="#dadada"/><rect x="2" y="7" width="1" height="1" fill="#dadada"/></svg>
<div style="left:398px;top:295px;width:37px;height:14px;background:#606060;box-shadow:0 0 0 1px #484848"></div>
<div class="t" style="left:401px;top:292.19px;font-size:11px;color:#f0f0f0;font-weight:400;width:21px;overflow:hidden">0</div>
<svg style="left:427px;top:298px" width="5" height="8" shape-rendering="crispEdges"><rect x="2" y="0" width="1" height="1" fill="#dadada"/><rect x="1" y="1" width="3" height="1" fill="#dadada"/><rect x="0" y="2" width="5" height="1" fill="#dadada"/><rect x="0" y="5" width="5" height="1" fill="#dadada"/><rect x="1" y="6" width="3" height="1" fill="#dadada"/><rect x="2" y="7" width="1" height="1" fill="#dadada"/></svg>
<div style="left:438px;top:294px;width:15px;height:15px;background:#616161;border-radius:3px;box-shadow:0 0 0 1px #474747"></div>
<div class="t" style="left:438px;top:292.19px;font-size:11px;color:#f0f0f0;font-weight:400;width:15px;text-align:center;text-indent:0px">R</div>
<div style="left:456px;top:295px;width:37px;height:14px;background:#606060;box-shadow:0 0 0 1px #484848"></div>
<div class="t" style="left:459px;top:292.19px;font-size:11px;color:#f0f0f0;font-weight:400;width:21px;overflow:hidden">10</div>
<svg style="left:485px;top:298px" width="5" height="8" shape-rendering="crispEdges"><rect x="2" y="0" width="1" height="1" fill="#dadada"/><rect x="1" y="1" width="3" height="1" fill="#dadada"/><rect x="0" y="2" width="5" height="1" fill="#dadada"/><rect x="0" y="5" width="5" height="1" fill="#dadada"/><rect x="1" y="6" width="3" height="1" fill="#dadada"/><rect x="2" y="7" width="1" height="1" fill="#dadada"/></svg>
<div style="left:506px;top:295px;width:37px;height:14px;background:#606060;box-shadow:0 0 0 1px #484848"></div>
<div class="t" style="left:509px;top:292.19px;font-size:11px;color:#f0f0f0;font-weight:400;width:21px;overflow:hidden">0</div>
<svg style="left:535px;top:298px" width="5" height="8" shape-rendering="crispEdges"><rect x="2" y="0" width="1" height="1" fill="#dadada"/><rect x="1" y="1" width="3" height="1" fill="#dadada"/><rect x="0" y="2" width="5" height="1" fill="#dadada"/><rect x="0" y="5" width="5" height="1" fill="#dadada"/><rect x="1" y="6" width="3" height="1" fill="#dadada"/><rect x="2" y="7" width="1" height="1" fill="#dadada"/></svg>
<div style="left:546px;top:294px;width:10px;height:15px;background:#616161;border-radius:3px;box-shadow:0 0 0 1px #474747"></div>
<div class="t" style="left:546px;top:292.19px;font-size:11px;color:#f0f0f0;font-weight:400;width:10px;text-align:center;text-indent:0px">A</div>
<div style="left:572px;top:295px;width:37px;height:14px;background:#606060;box-shadow:0 0 0 1px #484848"></div>
<div class="t" style="left:575px;top:292.19px;font-size:11px;color:#f0f0f0;font-weight:400;width:21px;overflow:hidden">0</div>
<svg style="left:601px;top:298px" width="5" height="8" shape-rendering="crispEdges"><rect x="2" y="0" width="1" height="1" fill="#dadada"/><rect x="1" y="1" width="3" height="1" fill="#dadada"/><rect x="0" y="2" width="5" height="1" fill="#dadada"/><rect x="0" y="5" width="5" height="1" fill="#dadada"/><rect x="1" y="6" width="3" height="1" fill="#dadada"/><rect x="2" y="7" width="1" height="1" fill="#dadada"/></svg>
<div style="left:612px;top:294px;width:10px;height:15px;background:#616161;border-radius:3px;box-shadow:0 0 0 1px #474747"></div>
<div class="t" style="left:612px;top:292.19px;font-size:11px;color:#f0f0f0;font-weight:400;width:10px;text-align:center;text-indent:0px">A</div>
<div style="left:626px;top:295px;width:37px;height:14px;background:#606060;box-shadow:0 0 0 1px #484848"></div>
<div class="t" style="left:629px;top:292.19px;font-size:11px;color:#f0f0f0;font-weight:400;width:21px;overflow:hidden">0</div>
<svg style="left:655px;top:298px" width="5" height="8" shape-rendering="crispEdges"><rect x="2" y="0" width="1" height="1" fill="#dadada"/><rect x="1" y="1" width="3" height="1" fill="#dadada"/><rect x="0" y="2" width="5" height="1" fill="#dadada"/><rect x="0" y="5" width="5" height="1" fill="#dadada"/><rect x="1" y="6" width="3" height="1" fill="#dadada"/><rect x="2" y="7" width="1" height="1" fill="#dadada"/></svg>
<div style="left:680px;top:295px;width:37px;height:14px;background:#606060;box-shadow:0 0 0 1px #484848"></div>
<div class="t" style="left:683px;top:292.19px;font-size:11px;color:#f0f0f0;font-weight:400;width:21px;overflow:hidden">2.0</div>
<svg style="left:709px;top:298px" width="5" height="8" shape-rendering="crispEdges"><rect x="2" y="0" width="1" height="1" fill="#dadada"/><rect x="1" y="1" width="3" height="1" fill="#dadada"/><rect x="0" y="2" width="5" height="1" fill="#dadada"/><rect x="0" y="5" width="5" height="1" fill="#dadada"/><rect x="1" y="6" width="3" height="1" fill="#dadada"/><rect x="2" y="7" width="1" height="1" fill="#dadada"/></svg>
<div style="left:722px;top:294px;width:10px;height:15px;background:#616161;border-radius:3px;box-shadow:0 0 0 1px #474747"></div>
<div class="t" style="left:722px;top:292.19px;font-size:11px;color:#f0f0f0;font-weight:400;width:10px;text-align:center;text-indent:0px">M</div>
<div style="left:175px;top:315px;width:12px;height:12px;background:#626262;box-shadow:0 0 0 1px #4a4a4a"></div>
<div class="t" style="right:410.15px;top:312.19px;font-size:11px;color:#f0f0f0;font-weight:400;;letter-spacing:-0.15px">smooth:</div>
<div style="left:359px;top:315px;width:12px;height:12px;background:#626262;box-shadow:0 0 0 1px #4a4a4a"></div>
<svg style="left:359px;top:315px" width="12" height="12"><path d="M1.6 4.8 L3.4 3.9 L4.5 7.0 L9.8 2.4 L10.5 3.2 L4.8 10.2 L3.5 10.3 Z" fill="#e6e6e6"/></svg>
<div style="left:438px;top:314px;width:15px;height:15px;background:#616161;border-radius:3px;box-shadow:0 0 0 1px #474747"></div>
<div class="t" style="left:438px;top:312.19px;font-size:11px;color:#f0f0f0;font-weight:400;width:15px;text-align:center;text-indent:0px">R</div>
<div style="left:175px;top:336px;width:12px;height:12px;background:#626262;box-shadow:0 0 0 1px #4a4a4a"></div>
<div class="t" style="right:451.32px;top:331.19px;font-size:11px;color:#f0f0f0;font-weight:400;;letter-spacing:-0.32px">hemisphere</div>
<div style="left:313px;top:335px;width:57px;height:14px;background:#606060;box-shadow:0 0 0 1px #484848"></div>
<div class="t" style="left:316px;top:332.19px;font-size:11px;color:#f0f0f0;font-weight:400;width:41px;overflow:hidden">0.0</div>
<svg style="left:362px;top:338px" width="5" height="8" shape-rendering="crispEdges"><rect x="2" y="0" width="1" height="1" fill="#dadada"/><rect x="1" y="1" width="3" height="1" fill="#dadada"/><rect x="0" y="2" width="5" height="1" fill="#dadada"/><rect x="0" y="5" width="5" height="1" fill="#dadada"/><rect x="1" y="6" width="3" height="1" fill="#dadada"/><rect x="2" y="7" width="1" height="1" fill="#dadada"/></svg>
<div style="left:398px;top:335px;width:37px;height:14px;background:#606060;box-shadow:0 0 0 1px #484848"></div>
<div class="t" style="left:401px;top:332.19px;font-size:11px;color:#f0f0f0;font-weight:400;width:21px;overflow:hidden">0.0</div>
<svg style="left:427px;top:338px" width="5" height="8" shape-rendering="crispEdges"><rect x="2" y="0" width="1" height="1" fill="#dadada"/><rect x="1" y="1" width="3" height="1" fill="#dadada"/><rect x="0" y="2" width="5" height="1" fill="#dadada"/><rect x="0" y="5" width="5" height="1" fill="#dadada"/><rect x="1" y="6" width="3" height="1" fill="#dadada"/><rect x="2" y="7" width="1" height="1" fill="#dadada"/></svg>
<div style="left:438px;top:334px;width:15px;height:15px;background:#616161;border-radius:3px;box-shadow:0 0 0 1px #474747"></div>
<div class="t" style="left:438px;top:332.19px;font-size:11px;color:#f0f0f0;font-weight:400;width:15px;text-align:center;text-indent:0px">R</div>
<div style="left:456px;top:335px;width:37px;height:14px;background:#606060;box-shadow:0 0 0 1px #484848"></div>
<div class="t" style="left:459px;top:332.19px;font-size:11px;color:#f0f0f0;font-weight:400;width:21px;overflow:hidden">10.0</div>
<svg style="left:485px;top:338px" width="5" height="8" shape-rendering="crispEdges"><rect x="2" y="0" width="1" height="1" fill="#dadada"/><rect x="1" y="1" width="3" height="1" fill="#dadada"/><rect x="0" y="2" width="5" height="1" fill="#dadada"/><rect x="0" y="5" width="5" height="1" fill="#dadada"/><rect x="1" y="6" width="3" height="1" fill="#dadada"/><rect x="2" y="7" width="1" height="1" fill="#dadada"/></svg>
<div style="left:506px;top:335px;width:37px;height:14px;background:#606060;box-shadow:0 0 0 1px #484848"></div>
<div class="t" style="left:509px;top:332.19px;font-size:11px;color:#f0f0f0;font-weight:400;width:21px;overflow:hidden">0.0</div>
<svg style="left:535px;top:338px" width="5" height="8" shape-rendering="crispEdges"><rect x="2" y="0" width="1" height="1" fill="#dadada"/><rect x="1" y="1" width="3" height="1" fill="#dadada"/><rect x="0" y="2" width="5" height="1" fill="#dadada"/><rect x="0" y="5" width="5" height="1" fill="#dadada"/><rect x="1" y="6" width="3" height="1" fill="#dadada"/><rect x="2" y="7" width="1" height="1" fill="#dadada"/></svg>
<div style="left:546px;top:334px;width:10px;height:15px;background:#616161;border-radius:3px;box-shadow:0 0 0 1px #474747"></div>
<div class="t" style="left:546px;top:332.19px;font-size:11px;color:#f0f0f0;font-weight:400;width:10px;text-align:center;text-indent:0px">A</div>
<div style="left:572px;top:335px;width:37px;height:14px;background:#606060;box-shadow:0 0 0 1px #484848"></div>
<div class="t" style="left:575px;top:332.19px;font-size:11px;color:#f0f0f0;font-weight:400;width:21px;overflow:hidden">0.0</div>
<svg style="left:601px;top:338px" width="5" height="8" shape-rendering="crispEdges"><rect x="2" y="0" width="1" height="1" fill="#dadada"/><rect x="1" y="1" width="3" height="1" fill="#dadada"/><rect x="0" y="2" width="5" height="1" fill="#dadada"/><rect x="0" y="5" width="5" height="1" fill="#dadada"/><rect x="1" y="6" width="3" height="1" fill="#dadada"/><rect x="2" y="7" width="1" height="1" fill="#dadada"/></svg>
<div style="left:612px;top:334px;width:10px;height:15px;background:#616161;border-radius:3px;box-shadow:0 0 0 1px #474747"></div>
<div class="t" style="left:612px;top:332.19px;font-size:11px;color:#f0f0f0;font-weight:400;width:10px;text-align:center;text-indent:0px">A</div>
<div style="left:626px;top:335px;width:37px;height:14px;background:#606060;box-shadow:0 0 0 1px #484848"></div>
<div class="t" style="left:629px;top:332.19px;font-size:11px;color:#f0f0f0;font-weight:400;width:21px;overflow:hidden">0.0</div>
<svg style="left:655px;top:338px" width="5" height="8" shape-rendering="crispEdges"><rect x="2" y="0" width="1" height="1" fill="#dadada"/><rect x="1" y="1" width="3" height="1" fill="#dadada"/><rect x="0" y="2" width="5" height="1" fill="#dadada"/><rect x="0" y="5" width="5" height="1" fill="#dadada"/><rect x="1" y="6" width="3" height="1" fill="#dadada"/><rect x="2" y="7" width="1" height="1" fill="#dadada"/></svg>
<div style="left:680px;top:335px;width:37px;height:14px;background:#606060;box-shadow:0 0 0 1px #484848"></div>
<div class="t" style="left:683px;top:332.19px;font-size:11px;color:#f0f0f0;font-weight:400;width:21px;overflow:hidden">2.0</div>
<svg style="left:709px;top:338px" width="5" height="8" shape-rendering="crispEdges"><rect x="2" y="0" width="1" height="1" fill="#dadada"/><rect x="1" y="1" width="3" height="1" fill="#dadada"/><rect x="0" y="2" width="5" height="1" fill="#dadada"/><rect x="0" y="5" width="5" height="1" fill="#dadada"/><rect x="1" y="6" width="3" height="1" fill="#dadada"/><rect x="2" y="7" width="1" height="1" fill="#dadada"/></svg>
<div style="left:722px;top:334px;width:10px;height:15px;background:#616161;border-radius:3px;box-shadow:0 0 0 1px #474747"></div>
<div class="t" style="left:722px;top:332.19px;font-size:11px;color:#f0f0f0;font-weight:400;width:10px;text-align:center;text-indent:0px">M</div>
<div style="left:175px;top:357px;width:12px;height:12px;background:#626262;box-shadow:0 0 0 1px #4a4a4a"></div>
<div class="t" style="right:451.35px;top:352.19px;font-size:11px;color:#f0f0f0;font-weight:400;;letter-spacing:-0.35px">chop</div>
<div style="left:313px;top:356px;width:57px;height:14px;background:#606060;box-shadow:0 0 0 1px #484848"></div>
<div class="t" style="left:316px;top:353.19px;font-size:11px;color:#f0f0f0;font-weight:400;width:41px;overflow:hidden">0</div>
<svg style="left:362px;top:359px" width="5" height="8" shape-rendering="crispEdges"><rect x="2" y="0" width="1" height="1" fill="#dadada"/><rect x="1" y="1" width="3" height="1" fill="#dadada"/><rect x="0" y="2" width="5" height="1" fill="#dadada"/><rect x="0" y="5" width="5" height="1" fill="#dadada"/><rect x="1" y="6" width="3" height="1" fill="#dadada"/><rect x="2" y="7" width="1" height="1" fill="#dadada"/></svg>
<div style="left:398px;top:356px;width:37px;height:14px;background:#606060;box-shadow:0 0 0 1px #484848"></div>
<div class="t" style="left:401px;top:353.19px;font-size:11px;color:#f0f0f0;font-weight:400;width:21px;overflow:hidden">0</div>
<svg style="left:427px;top:359px" width="5" height="8" shape-rendering="crispEdges"><rect x="2" y="0" width="1" height="1" fill="#dadada"/><rect x="1" y="1" width="3" height="1" fill="#dadada"/><rect x="0" y="2" width="5" height="1" fill="#dadada"/><rect x="0" y="5" width="5" height="1" fill="#dadada"/><rect x="1" y="6" width="3" height="1" fill="#dadada"/><rect x="2" y="7" width="1" height="1" fill="#dadada"/></svg>
<div style="left:438px;top:355px;width:15px;height:15px;background:#616161;border-radius:3px;box-shadow:0 0 0 1px #474747"></div>
<div class="t" style="left:438px;top:353.19px;font-size:11px;color:#f0f0f0;font-weight:400;width:15px;text-align:center;text-indent:0px">R</div>
<div style="left:456px;top:356px;width:37px;height:14px;background:#606060;box-shadow:0 0 0 1px #484848"></div>
<div class="t" style="left:459px;top:353.19px;font-size:11px;color:#f0f0f0;font-weight:400;width:21px;overflow:hidden">10</div>
<svg style="left:485px;top:359px" width="5" height="8" shape-rendering="crispEdges"><rect x="2" y="0" width="1" height="1" fill="#dadada"/><rect x="1" y="1" width="3" height="1" fill="#dadada"/><rect x="0" y="2" width="5" height="1" fill="#dadada"/><rect x="0" y="5" width="5" height="1" fill="#dadada"/><rect x="1" y="6" width="3" height="1" fill="#dadada"/><rect x="2" y="7" width="1" height="1" fill="#dadada"/></svg>
<div style="left:506px;top:356px;width:37px;height:14px;background:#606060;box-shadow:0 0 0 1px #484848"></div>
<div class="t" style="left:509px;top:353.19px;font-size:11px;color:#f0f0f0;font-weight:400;width:21px;overflow:hidden">0</div>
<svg style="left:535px;top:359px" width="5" height="8" shape-rendering="crispEdges"><rect x="2" y="0" width="1" height="1" fill="#dadada"/><rect x="1" y="1" width="3" height="1" fill="#dadada"/><rect x="0" y="2" width="5" height="1" fill="#dadada"/><rect x="0" y="5" width="5" height="1" fill="#dadada"/><rect x="1" y="6" width="3" height="1" fill="#dadada"/><rect x="2" y="7" width="1" height="1" fill="#dadada"/></svg>
<div style="left:546px;top:355px;width:10px;height:15px;background:#616161;border-radius:3px;box-shadow:0 0 0 1px #474747"></div>
<div class="t" style="left:546px;top:353.19px;font-size:11px;color:#f0f0f0;font-weight:400;width:10px;text-align:center;text-indent:0px">A</div>
<div style="left:572px;top:356px;width:37px;height:14px;background:#606060;box-shadow:0 0 0 1px #484848"></div>
<div class="t" style="left:575px;top:353.19px;font-size:11px;color:#f0f0f0;font-weight:400;width:21px;overflow:hidden">0</div>
<svg style="left:601px;top:359px" width="5" height="8" shape-rendering="crispEdges"><rect x="2" y="0" width="1" height="1" fill="#dadada"/><rect x="1" y="1" width="3" height="1" fill="#dadada"/><rect x="0" y="2" width="5" height="1" fill="#dadada"/><rect x="0" y="5" width="5" height="1" fill="#dadada"/><rect x="1" y="6" width="3" height="1" fill="#dadada"/><rect x="2" y="7" width="1" height="1" fill="#dadada"/></svg>
<div style="left:612px;top:355px;width:10px;height:15px;background:#616161;border-radius:3px;box-shadow:0 0 0 1px #474747"></div>
<div class="t" style="left:612px;top:353.19px;font-size:11px;color:#f0f0f0;font-weight:400;width:10px;text-align:center;text-indent:0px">A</div>
<div style="left:626px;top:356px;width:37px;height:14px;background:#606060;box-shadow:0 0 0 1px #484848"></div>
<div class="t" style="left:629px;top:353.19px;font-size:11px;color:#f0f0f0;font-weight:400;width:21px;overflow:hidden">0</div>
<svg style="left:655px;top:359px" width="5" height="8" shape-rendering="crispEdges"><rect x="2" y="0" width="1" height="1" fill="#dadada"/><rect x="1" y="1" width="3" height="1" fill="#dadada"/><rect x="0" y="2" width="5" height="1" fill="#dadada"/><rect x="0" y="5" width="5" height="1" fill="#dadada"/><rect x="1" y="6" width="3" height="1" fill="#dadada"/><rect x="2" y="7" width="1" height="1" fill="#dadada"/></svg>
<div style="left:680px;top:356px;width:37px;height:14px;background:#606060;box-shadow:0 0 0 1px #484848"></div>
<div class="t" style="left:683px;top:353.19px;font-size:11px;color:#f0f0f0;font-weight:400;width:21px;overflow:hidden">2.0</div>
<svg style="left:709px;top:359px" width="5" height="8" shape-rendering="crispEdges"><rect x="2" y="0" width="1" height="1" fill="#dadada"/><rect x="1" y="1" width="3" height="1" fill="#dadada"/><rect x="0" y="2" width="5" height="1" fill="#dadada"/><rect x="0" y="5" width="5" height="1" fill="#dadada"/><rect x="1" y="6" width="3" height="1" fill="#dadada"/><rect x="2" y="7" width="1" height="1" fill="#dadada"/></svg>
<div style="left:722px;top:355px;width:10px;height:15px;background:#616161;border-radius:3px;box-shadow:0 0 0 1px #474747"></div>
<div class="t" style="left:722px;top:353.19px;font-size:11px;color:#f0f0f0;font-weight:400;width:10px;text-align:center;text-indent:0px">M</div>
<div style="left:175px;top:376px;width:12px;height:12px;background:#626262;box-shadow:0 0 0 1px #4a4a4a"></div>
<div class="t" style="right:409.86px;top:373.19px;font-size:11px;color:#f0f0f0;font-weight:400;;letter-spacing:0.14px">recenter:</div>
<div style="left:359px;top:376px;width:12px;height:12px;background:#626262;box-shadow:0 0 0 1px #4a4a4a"></div>
<div style="left:438px;top:375px;width:15px;height:15px;background:#616161;border-radius:3px;box-shadow:0 0 0 1px #474747"></div>
<div class="t" style="left:438px;top:373.19px;font-size:11px;color:#f0f0f0;font-weight:400;width:15px;text-align:center;text-indent:0px">R</div>
<div style="left:175px;top:395px;width:12px;height:12px;background:#626262;box-shadow:0 0 0 1px #4a4a4a"></div>
<div class="t" style="right:410.15px;top:392.19px;font-size:11px;color:#f0f0f0;font-weight:400;;letter-spacing:-0.15px">mapcoords:</div>
<div style="left:359px;top:395px;width:12px;height:12px;background:#626262;box-shadow:0 0 0 1px #4a4a4a"></div>
<svg style="left:359px;top:395px" width="12" height="12"><path d="M1.6 4.8 L3.4 3.9 L4.5 7.0 L9.8 2.4 L10.5 3.2 L4.8 10.2 L3.5 10.3 Z" fill="#e6e6e6"/></svg>
<div style="left:438px;top:394px;width:15px;height:15px;background:#616161;border-radius:3px;box-shadow:0 0 0 1px #474747"></div>
<div class="t" style="left:438px;top:392.19px;font-size:11px;color:#f0f0f0;font-weight:400;width:15px;text-align:center;text-indent:0px">R</div>
<div style="left:175px;top:414px;width:12px;height:12px;background:#626262;box-shadow:0 0 0 1px #4a4a4a"></div>
<div class="t" style="right:410.15px;top:411.19px;font-size:11px;color:#f0f0f0;font-weight:400;;letter-spacing:-0.15px">slice:</div>
<div style="left:359px;top:414px;width:12px;height:12px;background:#626262;box-shadow:0 0 0 1px #4a4a4a"></div>
<div style="left:438px;top:413px;width:15px;height:15px;background:#616161;border-radius:3px;box-shadow:0 0 0 1px #474747"></div>
<div class="t" style="left:438px;top:411.19px;font-size:11px;color:#f0f0f0;font-weight:400;width:15px;text-align:center;text-indent:0px">R</div>
<div style="left:175px;top:435px;width:12px;height:12px;background:#626262;box-shadow:0 0 0 1px #4a4a4a"></div>
<div class="t" style="right:451.31px;top:430.19px;font-size:11px;color:#f0f0f0;font-weight:400;;letter-spacing:-0.31px">slicefrom</div>
<div style="left:313px;top:434px;width:57px;height:14px;background:#606060;box-shadow:0 0 0 1px #484848"></div>
<div class="t" style="left:316px;top:431.19px;font-size:11px;color:#f0f0f0;font-weight:400;width:41px;overflow:hidden">0.0</div>
<svg style="left:362px;top:437px" width="5" height="8" shape-rendering="crispEdges"><rect x="2" y="0" width="1" height="1" fill="#dadada"/><rect x="1" y="1" width="3" height="1" fill="#dadada"/><rect x="0" y="2" width="5" height="1" fill="#dadada"/><rect x="0" y="5" width="5" height="1" fill="#dadada"/><rect x="1" y="6" width="3" height="1" fill="#dadada"/><rect x="2" y="7" width="1" height="1" fill="#dadada"/></svg>
<div style="left:398px;top:434px;width:37px;height:14px;background:#606060;box-shadow:0 0 0 1px #484848"></div>
<div class="t" style="left:401px;top:431.19px;font-size:11px;color:#f0f0f0;font-weight:400;width:21px;overflow:hidden">0.0</div>
<svg style="left:427px;top:437px" width="5" height="8" shape-rendering="crispEdges"><rect x="2" y="0" width="1" height="1" fill="#dadada"/><rect x="1" y="1" width="3" height="1" fill="#dadada"/><rect x="0" y="2" width="5" height="1" fill="#dadada"/><rect x="0" y="5" width="5" height="1" fill="#dadada"/><rect x="1" y="6" width="3" height="1" fill="#dadada"/><rect x="2" y="7" width="1" height="1" fill="#dadada"/></svg>
<div style="left:438px;top:433px;width:15px;height:15px;background:#616161;border-radius:3px;box-shadow:0 0 0 1px #474747"></div>
<div class="t" style="left:438px;top:431.19px;font-size:11px;color:#f0f0f0;font-weight:400;width:15px;text-align:center;text-indent:0px">R</div>
<div style="left:456px;top:434px;width:37px;height:14px;background:#606060;box-shadow:0 0 0 1px #484848"></div>
<div class="t" style="left:459px;top:431.19px;font-size:11px;color:#f0f0f0;font-weight:400;width:21px;overflow:hidden">10.0</div>
<svg style="left:485px;top:437px" width="5" height="8" shape-rendering="crispEdges"><rect x="2" y="0" width="1" height="1" fill="#dadada"/><rect x="1" y="1" width="3" height="1" fill="#dadada"/><rect x="0" y="2" width="5" height="1" fill="#dadada"/><rect x="0" y="5" width="5" height="1" fill="#dadada"/><rect x="1" y="6" width="3" height="1" fill="#dadada"/><rect x="2" y="7" width="1" height="1" fill="#dadada"/></svg>
<div style="left:506px;top:434px;width:37px;height:14px;background:#606060;box-shadow:0 0 0 1px #484848"></div>
<div class="t" style="left:509px;top:431.19px;font-size:11px;color:#f0f0f0;font-weight:400;width:21px;overflow:hidden">0.0</div>
<svg style="left:535px;top:437px" width="5" height="8" shape-rendering="crispEdges"><rect x="2" y="0" width="1" height="1" fill="#dadada"/><rect x="1" y="1" width="3" height="1" fill="#dadada"/><rect x="0" y="2" width="5" height="1" fill="#dadada"/><rect x="0" y="5" width="5" height="1" fill="#dadada"/><rect x="1" y="6" width="3" height="1" fill="#dadada"/><rect x="2" y="7" width="1" height="1" fill="#dadada"/></svg>
<div style="left:546px;top:433px;width:10px;height:15px;background:#616161;border-radius:3px;box-shadow:0 0 0 1px #474747"></div>
<div class="t" style="left:546px;top:431.19px;font-size:11px;color:#f0f0f0;font-weight:400;width:10px;text-align:center;text-indent:0px">A</div>
<div style="left:572px;top:434px;width:37px;height:14px;background:#606060;box-shadow:0 0 0 1px #484848"></div>
<div class="t" style="left:575px;top:431.19px;font-size:11px;color:#f0f0f0;font-weight:400;width:21px;overflow:hidden">0.0</div>
<svg style="left:601px;top:437px" width="5" height="8" shape-rendering="crispEdges"><rect x="2" y="0" width="1" height="1" fill="#dadada"/><rect x="1" y="1" width="3" height="1" fill="#dadada"/><rect x="0" y="2" width="5" height="1" fill="#dadada"/><rect x="0" y="5" width="5" height="1" fill="#dadada"/><rect x="1" y="6" width="3" height="1" fill="#dadada"/><rect x="2" y="7" width="1" height="1" fill="#dadada"/></svg>
<div style="left:612px;top:433px;width:10px;height:15px;background:#616161;border-radius:3px;box-shadow:0 0 0 1px #474747"></div>
<div class="t" style="left:612px;top:431.19px;font-size:11px;color:#f0f0f0;font-weight:400;width:10px;text-align:center;text-indent:0px">A</div>
<div style="left:626px;top:434px;width:37px;height:14px;background:#606060;box-shadow:0 0 0 1px #484848"></div>
<div class="t" style="left:629px;top:431.19px;font-size:11px;color:#f0f0f0;font-weight:400;width:21px;overflow:hidden">0.0</div>
<svg style="left:655px;top:437px" width="5" height="8" shape-rendering="crispEdges"><rect x="2" y="0" width="1" height="1" fill="#dadada"/><rect x="1" y="1" width="3" height="1" fill="#dadada"/><rect x="0" y="2" width="5" height="1" fill="#dadada"/><rect x="0" y="5" width="5" height="1" fill="#dadada"/><rect x="1" y="6" width="3" height="1" fill="#dadada"/><rect x="2" y="7" width="1" height="1" fill="#dadada"/></svg>
<div style="left:680px;top:434px;width:37px;height:14px;background:#606060;box-shadow:0 0 0 1px #484848"></div>
<div class="t" style="left:683px;top:431.19px;font-size:11px;color:#f0f0f0;font-weight:400;width:21px;overflow:hidden">2.0</div>
<svg style="left:709px;top:437px" width="5" height="8" shape-rendering="crispEdges"><rect x="2" y="0" width="1" height="1" fill="#dadada"/><rect x="1" y="1" width="3" height="1" fill="#dadada"/><rect x="0" y="2" width="5" height="1" fill="#dadada"/><rect x="0" y="5" width="5" height="1" fill="#dadada"/><rect x="1" y="6" width="3" height="1" fill="#dadada"/><rect x="2" y="7" width="1" height="1" fill="#dadada"/></svg>
<div style="left:722px;top:433px;width:10px;height:15px;background:#616161;border-radius:3px;box-shadow:0 0 0 1px #474747"></div>
<div class="t" style="left:722px;top:431.19px;font-size:11px;color:#f0f0f0;font-weight:400;width:10px;text-align:center;text-indent:0px">M</div>
<div style="left:175px;top:456px;width:12px;height:12px;background:#626262;box-shadow:0 0 0 1px #4a4a4a"></div>
<div class="t" style="right:451.1px;top:451.19px;font-size:11px;color:#f0f0f0;font-weight:400;;letter-spacing:-0.1px">sliceto</div>
<div style="left:313px;top:455px;width:57px;height:14px;background:#606060;box-shadow:0 0 0 1px #484848"></div>
<div class="t" style="left:316px;top:452.19px;font-size:11px;color:#f0f0f0;font-weight:400;width:41px;overflow:hidden">0.0</div>
<svg style="left:362px;top:458px" width="5" height="8" shape-rendering="crispEdges"><rect x="2" y="0" width="1" height="1" fill="#dadada"/><rect x="1" y="1" width="3" height="1" fill="#dadada"/><rect x="0" y="2" width="5" height="1" fill="#dadada"/><rect x="0" y="5" width="5" height="1" fill="#dadada"/><rect x="1" y="6" width="3" height="1" fill="#dadada"/><rect x="2" y="7" width="1" height="1" fill="#dadada"/></svg>
<div style="left:398px;top:455px;width:37px;height:14px;background:#606060;box-shadow:0 0 0 1px #484848"></div>
<div class="t" style="left:401px;top:452.19px;font-size:11px;color:#f0f0f0;font-weight:400;width:21px;overflow:hidden">0.0</div>
<svg style="left:427px;top:458px" width="5" height="8" shape-rendering="crispEdges"><rect x="2" y="0" width="1" height="1" fill="#dadada"/><rect x="1" y="1" width="3" height="1" fill="#dadada"/><rect x="0" y="2" width="5" height="1" fill="#dadada"/><rect x="0" y="5" width="5" height="1" fill="#dadada"/><rect x="1" y="6" width="3" height="1" fill="#dadada"/><rect x="2" y="7" width="1" height="1" fill="#dadada"/></svg>
<div style="left:438px;top:454px;width:15px;height:15px;background:#616161;border-radius:3px;box-shadow:0 0 0 1px #474747"></div>
<div class="t" style="left:438px;top:452.19px;font-size:11px;color:#f0f0f0;font-weight:400;width:15px;text-align:center;text-indent:0px">R</div>
<div style="left:456px;top:455px;width:37px;height:14px;background:#606060;box-shadow:0 0 0 1px #484848"></div>
<div class="t" style="left:459px;top:452.19px;font-size:11px;color:#f0f0f0;font-weight:400;width:21px;overflow:hidden">10.0</div>
<svg style="left:485px;top:458px" width="5" height="8" shape-rendering="crispEdges"><rect x="2" y="0" width="1" height="1" fill="#dadada"/><rect x="1" y="1" width="3" height="1" fill="#dadada"/><rect x="0" y="2" width="5" height="1" fill="#dadada"/><rect x="0" y="5" width="5" height="1" fill="#dadada"/><rect x="1" y="6" width="3" height="1" fill="#dadada"/><rect x="2" y="7" width="1" height="1" fill="#dadada"/></svg>
<div style="left:506px;top:455px;width:37px;height:14px;background:#606060;box-shadow:0 0 0 1px #484848"></div>
<div class="t" style="left:509px;top:452.19px;font-size:11px;color:#f0f0f0;font-weight:400;width:21px;overflow:hidden">0.0</div>
<svg style="left:535px;top:458px" width="5" height="8" shape-rendering="crispEdges"><rect x="2" y="0" width="1" height="1" fill="#dadada"/><rect x="1" y="1" width="3" height="1" fill="#dadada"/><rect x="0" y="2" width="5" height="1" fill="#dadada"/><rect x="0" y="5" width="5" height="1" fill="#dadada"/><rect x="1" y="6" width="3" height="1" fill="#dadada"/><rect x="2" y="7" width="1" height="1" fill="#dadada"/></svg>
<div style="left:546px;top:454px;width:10px;height:15px;background:#616161;border-radius:3px;box-shadow:0 0 0 1px #474747"></div>
<div class="t" style="left:546px;top:452.19px;font-size:11px;color:#f0f0f0;font-weight:400;width:10px;text-align:center;text-indent:0px">A</div>
<div style="left:572px;top:455px;width:37px;height:14px;background:#606060;box-shadow:0 0 0 1px #484848"></div>
<div class="t" style="left:575px;top:452.19px;font-size:11px;color:#f0f0f0;font-weight:400;width:21px;overflow:hidden">0.0</div>
<svg style="left:601px;top:458px" width="5" height="8" shape-rendering="crispEdges"><rect x="2" y="0" width="1" height="1" fill="#dadada"/><rect x="1" y="1" width="3" height="1" fill="#dadada"/><rect x="0" y="2" width="5" height="1" fill="#dadada"/><rect x="0" y="5" width="5" height="1" fill="#dadada"/><rect x="1" y="6" width="3" height="1" fill="#dadada"/><rect x="2" y="7" width="1" height="1" fill="#dadada"/></svg>
<div style="left:612px;top:454px;width:10px;height:15px;background:#616161;border-radius:3px;box-shadow:0 0 0 1px #474747"></div>
<div class="t" style="left:612px;top:452.19px;font-size:11px;color:#f0f0f0;font-weight:400;width:10px;text-align:center;text-indent:0px">A</div>
<div style="left:626px;top:455px;width:37px;height:14px;background:#606060;box-shadow:0 0 0 1px #484848"></div>
<div class="t" style="left:629px;top:452.19px;font-size:11px;color:#f0f0f0;font-weight:400;width:21px;overflow:hidden">0.0</div>
<svg style="left:655px;top:458px" width="5" height="8" shape-rendering="crispEdges"><rect x="2" y="0" width="1" height="1" fill="#dadada"/><rect x="1" y="1" width="3" height="1" fill="#dadada"/><rect x="0" y="2" width="5" height="1" fill="#dadada"/><rect x="0" y="5" width="5" height="1" fill="#dadada"/><rect x="1" y="6" width="3" height="1" fill="#dadada"/><rect x="2" y="7" width="1" height="1" fill="#dadada"/></svg>
<div style="left:680px;top:455px;width:37px;height:14px;background:#606060;box-shadow:0 0 0 1px #484848"></div>
<div class="t" style="left:683px;top:452.19px;font-size:11px;color:#f0f0f0;font-weight:400;width:21px;overflow:hidden">2.0</div>
<svg style="left:709px;top:458px" width="5" height="8" shape-rendering="crispEdges"><rect x="2" y="0" width="1" height="1" fill="#dadada"/><rect x="1" y="1" width="3" height="1" fill="#dadada"/><rect x="0" y="2" width="5" height="1" fill="#dadada"/><rect x="0" y="5" width="5" height="1" fill="#dadada"/><rect x="1" y="6" width="3" height="1" fill="#dadada"/><rect x="2" y="7" width="1" height="1" fill="#dadada"/></svg>
<div style="left:722px;top:454px;width:10px;height:15px;background:#616161;border-radius:3px;box-shadow:0 0 0 1px #474747"></div>
<div class="t" style="left:722px;top:452.19px;font-size:11px;color:#f0f0f0;font-weight:400;width:10px;text-align:center;text-indent:0px">M</div>
<div style="left:175px;top:477px;width:12px;height:12px;background:#626262;box-shadow:0 0 0 1px #4a4a4a"></div>
<div class="t" style="right:410.25px;top:472.19px;font-size:11px;color:#f0f0f0;font-weight:400;;letter-spacing:-0.25px">realWorldMapSize:</div>
<div style="left:359px;top:475px;width:12px;height:12px;background:#626262;box-shadow:0 0 0 1px #4a4a4a"></div>
<div style="left:438px;top:474px;width:15px;height:15px;background:#616161;border-radius:3px;box-shadow:0 0 0 1px #474747"></div>
<div class="t" style="left:438px;top:472.19px;font-size:11px;color:#f0f0f0;font-weight:400;width:15px;text-align:center;text-indent:0px">R</div>
<div style="left:168px;top:598px;width:582px;height:154px;background:#737373"></div>
<div style="left:169px;top:568px;width:580px;height:30px;background:#fff"></div>
<div style="left:169px;top:598px;width:580px;height:153px;background:#444444"></div>
<svg style="left:177px;top:574px" width="16" height="16"><defs><linearGradient id="g557" x1="0" y1="0" x2="0" y2="1"><stop offset="0" stop-color="#cde8ea"/><stop offset="1" stop-color="#e4f3f4"/></linearGradient></defs><rect width="16" height="16" fill="url(#g557)"/><text x="0" y="0" transform="translate(8.1 12.7) scale(0.86 1)" font-family="Liberation Sans" font-weight="700" font-size="16" fill="#1b9197" stroke="#1b9197" stroke-width="0.9" text-anchor="middle">3</text></svg>
<div class="t" style="left:198px;top:572.84px;font-size:12px;color:#000;font-weight:400;;letter-spacing:-0.6px">Sphere</div>
<div style="left:630px;top:582px;width:10px;height:1px;background:#000"></div>
<div style="left:675px;top:577px;width:10px;height:10px;box-shadow:inset 0 0 0 1px #c8c8c8"></div>
<svg style="left:720px;top:576px" width="12" height="12"><path d="M1 1 L11 11 M11 1 L1 11" stroke="#000" stroke-width="0.85"/></svg>
<svg style="left:202px;top:603px" width="16" height="16"><circle cx="8" cy="8" r="7.5" fill="#3e3e3e"/><circle cx="8" cy="8" r="6.8" fill="#646464"/><circle cx="8" cy="8" r="4.3" fill="#dedede"/></svg>
<div class="t" style="left:221px;top:601.19px;font-size:11px;color:#f0f0f0;font-weight:400;;letter-spacing:-0.8px">All</div>
<svg style="left:236px;top:603px" width="16" height="16"><circle cx="8" cy="8" r="7.5" fill="#3e3e3e"/><circle cx="8" cy="8" r="6.8" fill="#646464"/></svg>
<div class="t" style="left:255px;top:601.19px;font-size:11px;color:#f0f0f0;font-weight:400;;letter-spacing:-0.33px">Selected</div>
<div style="left:319px;top:604px;width:12px;height:12px;background:#626262;box-shadow:0 0 0 1px #4a4a4a"></div>
<svg style="left:319px;top:604px" width="12" height="12"><path d="M1.6 4.8 L3.4 3.9 L4.5 7.0 L9.8 2.4 L10.5 3.2 L4.8 10.2 L3.5 10.3 Z" fill="#e6e6e6"/></svg>
<div class="t" style="left:335px;top:601.19px;font-size:11px;color:#f0f0f0;font-weight:400;;letter-spacing:-0.37px">Hidden</div>
<div style="left:379px;top:604px;width:12px;height:12px;background:#626262;box-shadow:0 0 0 1px #4a4a4a"></div>
<svg style="left:379px;top:604px" width="12" height="12"><path d="M1.6 4.8 L3.4 3.9 L4.5 7.0 L9.8 2.4 L10.5 3.2 L4.8 10.2 L3.5 10.3 Z" fill="#e6e6e6"/></svg>
<div class="t" style="left:395px;top:601.19px;font-size:11px;color:#f0f0f0;font-weight:400;;letter-spacing:-0.37px">Exclude</div>
<div style="left:446px;top:601px;width:121px;height:17px;background:#5a5a5a"></div>
<div style="left:447px;top:602px;width:119px;height:15px;background:#f0f0f0"></div>
<div style="left:448px;top:603px;width:117px;height:13px;background:#262626"></div>
<div style="left:449px;top:604px;width:115px;height:11px;background:#3d3d3d"></div>
<div class="t" style="left:451px;top:600.19px;font-size:11px;color:#f0f0f0;font-weight:400;;letter-spacing:-0.4px">ExcMod</div>
<div style="left:658px;top:604px;width:30px;height:13px;background:#5a5a5a;border-radius:3px"></div>
<div class="t" style="left:660px;top:601.19px;font-size:11px;color:#dadada;font-weight:400;;letter-spacing:-0.45px">Load</div>
<div style="left:690px;top:604px;width:30px;height:13px;background:#5a5a5a;border-radius:3px"></div>
<div class="t" style="left:692px;top:601.19px;font-size:11px;color:#dadada;font-weight:400;;letter-spacing:-0.43px">Save</div>
<div style="left:722px;top:604px;width:10px;height:13px;background:#5a5a5a;border-radius:3px"></div>
<div class="t" style="left:723px;top:601.19px;font-size:11px;color:#dadada;font-weight:400;">S</div>
<div style="left:733px;top:604px;width:11px;height:13px;background:#5a5a5a;border-radius:3px"></div>
<div class="t" style="left:734px;top:601.19px;font-size:11px;color:#dadada;font-weight:400;">U</div>
<div style="left:172px;top:640px;width:59px;height:19px;background:#4d94f7"></div>
<div class="t" style="left:183px;top:639.19px;font-size:11px;color:#e8e8e8;font-weight:400;">filter</div>
<div class="t" style="left:256px;top:641.19px;font-size:11px;color:#f0f0f0;font-weight:400;">Property</div>
<div class="t" style="left:426px;top:629.19px;font-size:11px;color:#f0f0f0;font-weight:400;;letter-spacing:-0.4px">Random</div>
<div class="t" style="left:406.5px;top:641.19px;font-size:11px;color:#f0f0f0;font-weight:400;;letter-spacing:-0.5px">Min</div>
<div class="t" style="left:466.5px;top:641.19px;font-size:11px;color:#f0f0f0;font-weight:400;;letter-spacing:-0.5px">Max</div>
<div class="t" style="left:517px;top:641.19px;font-size:11px;color:#f0f0f0;font-weight:400;;letter-spacing:-0.23px">Relative</div>
<div class="t" style="left:596px;top:629.19px;font-size:11px;color:#f0f0f0;font-weight:400;">Effect Only</div>
<div class="t" style="left:579px;top:641.19px;font-size:11px;color:#f0f0f0;font-weight:400;;letter-spacing:-0.4px">Value</div>
<div class="t" style="left:639px;top:641.19px;font-size:11px;color:#f0f0f0;font-weight:400;;letter-spacing:-0.6px">Apply</div>
<div class="t" style="left:698.5px;top:641.19px;font-size:11px;color:#f0f0f0;font-weight:400;;letter-spacing:-0.38px">Multiply</div>
<div style="left:171px;top:662px;width:578px;height:67px;background:#404040;border-radius:4px 0 0 4px"></div>
<div style="left:172px;top:663px;width:577px;height:65px;background:#515151;border-radius:3px 0 0 3px"></div>
<svg style="left:187px;top:669px" width="9" height="7"><path d="M1 1 L7 1 L4 5 Z" fill="#c4c4c4"/></svg>
<div class="t" style="left:201px;top:662.98px;font-size:11.6px;color:#f0f0f0;font-weight:700;">Base Object Properties : Sphere</div>
<div style="left:737px;top:669px;width:1px;height:1px;background:#b4b4b4"></div>
<div style="left:737px;top:671px;width:1px;height:1px;background:#b4b4b4"></div>
<div style="left:737px;top:673px;width:1px;height:1px;background:#b4b4b4"></div>
<div style="left:739px;top:669px;width:1px;height:1px;background:#b4b4b4"></div>
<div style="left:739px;top:671px;width:1px;height:1px;background:#b4b4b4"></div>
<div style="left:739px;top:673px;width:1px;height:1px;background:#b4b4b4"></div>
<div style="left:741px;top:669px;width:1px;height:1px;background:#b4b4b4"></div>
<div style="left:741px;top:671px;width:1px;height:1px;background:#b4b4b4"></div>
<div style="left:741px;top:673px;width:1px;height:1px;background:#b4b4b4"></div>
<div style="left:172px;top:683px;width:573px;height:1px;background:#464646"></div>
<div style="left:172px;top:704px;width:573px;height:1px;background:#464646"></div>
<div style="left:174px;top:687px;width:14px;height:14px;background:#5f9bff"></div>
<div class="t" style="right:451.1px;top:683.19px;font-size:11px;color:#f0f0f0;font-weight:400;;letter-spacing:-0.1px">radius</div>
<div style="left:313px;top:687px;width:57px;height:14px;background:#606060;box-shadow:0 0 0 1px #484848"></div>
<div class="t" style="left:316px;top:684.19px;font-size:11px;color:#f0f0f0;font-weight:400;width:41px;overflow:hidden">7.07097m</div>
<svg style="left:362px;top:690px" width="5" height="8" shape-rendering="crispEdges"><rect x="2" y="0" width="1" height="1" fill="#dadada"/><rect x="1" y="1" width="3" height="1" fill="#dadada"/><rect x="0" y="2" width="5" height="1" fill="#dadada"/><rect x="0" y="5" width="5" height="1" fill="#dadada"/><rect x="1" y="6" width="3" height="1" fill="#dadada"/><rect x="2" y="7" width="1" height="1" fill="#dadada"/></svg>
<div style="left:398px;top:687px;width:37px;height:14px;background:#606060;box-shadow:0 0 0 1px #484848"></div>
<div class="t" style="left:401px;top:684.19px;font-size:11px;color:#f0f0f0;font-weight:400;width:21px;overflow:hidden">0.0m</div>
<svg style="left:427px;top:690px" width="5" height="8" shape-rendering="crispEdges"><rect x="2" y="0" width="1" height="1" fill="#dadada"/><rect x="1" y="1" width="3" height="1" fill="#dadada"/><rect x="0" y="2" width="5" height="1" fill="#dadada"/><rect x="0" y="5" width="5" height="1" fill="#dadada"/><rect x="1" y="6" width="3" height="1" fill="#dadada"/><rect x="2" y="7" width="1" height="1" fill="#dadada"/></svg>
<div style="left:438px;top:686px;width:15px;height:15px;background:#616161;border-radius:3px;box-shadow:0 0 0 1px #474747"></div>
<div class="t" style="left:438px;top:684.19px;font-size:11px;color:#f0f0f0;font-weight:400;width:15px;text-align:center;text-indent:0px">R</div>
<div style="left:456px;top:687px;width:37px;height:14px;background:#606060;box-shadow:0 0 0 1px #484848"></div>
<div class="t" style="left:459px;top:684.19px;font-size:11px;color:#f0f0f0;font-weight:400;width:21px;overflow:hidden">10.0</div>
<svg style="left:485px;top:690px" width="5" height="8" shape-rendering="crispEdges"><rect x="2" y="0" width="1" height="1" fill="#dadada"/><rect x="1" y="1" width="3" height="1" fill="#dadada"/><rect x="0" y="2" width="5" height="1" fill="#dadada"/><rect x="0" y="5" width="5" height="1" fill="#dadada"/><rect x="1" y="6" width="3" height="1" fill="#dadada"/><rect x="2" y="7" width="1" height="1" fill="#dadada"/></svg>
<div style="left:506px;top:687px;width:37px;height:14px;background:#606060;box-shadow:0 0 0 1px #484848"></div>
<div class="t" style="left:509px;top:684.19px;font-size:11px;color:#f0f0f0;font-weight:400;width:21px;overflow:hidden">0.0m</div>
<svg style="left:535px;top:690px" width="5" height="8" shape-rendering="crispEdges"><rect x="2" y="0" width="1" height="1" fill="#dadada"/><rect x="1" y="1" width="3" height="1" fill="#dadada"/><rect x="0" y="2" width="5" height="1" fill="#dadada"/><rect x="0" y="5" width="5" height="1" fill="#dadada"/><rect x="1" y="6" width="3" height="1" fill="#dadada"/><rect x="2" y="7" width="1" height="1" fill="#dadada"/></svg>
<div style="left:546px;top:686px;width:10px;height:15px;background:#616161;border-radius:3px;box-shadow:0 0 0 1px #474747"></div>
<div class="t" style="left:546px;top:684.19px;font-size:11px;color:#f0f0f0;font-weight:400;width:10px;text-align:center;text-indent:0px">A</div>
<div style="left:572px;top:687px;width:37px;height:14px;background:#606060;box-shadow:0 0 0 1px #484848"></div>
<div class="t" style="left:575px;top:684.19px;font-size:11px;color:#f0f0f0;font-weight:400;width:21px;overflow:hidden">0.0m</div>
<svg style="left:601px;top:690px" width="5" height="8" shape-rendering="crispEdges"><rect x="2" y="0" width="1" height="1" fill="#dadada"/><rect x="1" y="1" width="3" height="1" fill="#dadada"/><rect x="0" y="2" width="5" height="1" fill="#dadada"/><rect x="0" y="5" width="5" height="1" fill="#dadada"/><rect x="1" y="6" width="3" height="1" fill="#dadada"/><rect x="2" y="7" width="1" height="1" fill="#dadada"/></svg>
<div style="left:612px;top:686px;width:10px;height:15px;background:#616161;border-radius:3px;box-shadow:0 0 0 1px #474747"></div>
<div class="t" style="left:612px;top:684.19px;font-size:11px;color:#f0f0f0;font-weight:400;width:10px;text-align:center;text-indent:0px">A</div>
<div style="left:626px;top:687px;width:37px;height:14px;background:#606060;box-shadow:0 0 0 1px #484848"></div>
<div class="t" style="left:629px;top:684.19px;font-size:11px;color:#f0f0f0;font-weight:400;width:21px;overflow:hidden">0.0m</div>
<svg style="left:655px;top:690px" width="5" height="8" shape-rendering="crispEdges"><rect x="2" y="0" width="1" height="1" fill="#dadada"/><rect x="1" y="1" width="3" height="1" fill="#dadada"/><rect x="0" y="2" width="5" height="1" fill="#dadada"/><rect x="0" y="5" width="5" height="1" fill="#dadada"/><rect x="1" y="6" width="3" height="1" fill="#dadada"/><rect x="2" y="7" width="1" height="1" fill="#dadada"/></svg>
<div style="left:680px;top:687px;width:37px;height:14px;background:#606060;box-shadow:0 0 0 1px #484848"></div>
<div class="t" style="left:683px;top:684.19px;font-size:11px;color:#f0f0f0;font-weight:400;width:21px;overflow:hidden">2.0</div>
<svg style="left:709px;top:690px" width="5" height="8" shape-rendering="crispEdges"><rect x="2" y="0" width="1" height="1" fill="#dadada"/><rect x="1" y="1" width="3" height="1" fill="#dadada"/><rect x="0" y="2" width="5" height="1" fill="#dadada"/><rect x="0" y="5" width="5" height="1" fill="#dadada"/><rect x="1" y="6" width="3" height="1" fill="#dadada"/><rect x="2" y="7" width="1" height="1" fill="#dadada"/></svg>
<div style="left:722px;top:686px;width:10px;height:15px;background:#616161;border-radius:3px;box-shadow:0 0 0 1px #474747"></div>
<div class="t" style="left:722px;top:684.19px;font-size:11px;color:#f0f0f0;font-weight:400;width:10px;text-align:center;text-indent:0px">M</div>
<div style="left:174px;top:708px;width:14px;height:14px;background:#5f9bff"></div>
<div class="t" style="right:451.43px;top:704.19px;font-size:11px;color:#f0f0f0;font-weight:400;;letter-spacing:-0.43px">segs</div>
<div style="left:313px;top:708px;width:57px;height:14px;background:#606060;box-shadow:0 0 0 1px #484848"></div>
<div class="t" style="left:316px;top:705.19px;font-size:11px;color:#f0f0f0;font-weight:400;width:41px;overflow:hidden">32</div>
<svg style="left:362px;top:711px" width="5" height="8" shape-rendering="crispEdges"><rect x="2" y="0" width="1" height="1" fill="#dadada"/><rect x="1" y="1" width="3" height="1" fill="#dadada"/><rect x="0" y="2" width="5" height="1" fill="#dadada"/><rect x="0" y="5" width="5" height="1" fill="#dadada"/><rect x="1" y="6" width="3" height="1" fill="#dadada"/><rect x="2" y="7" width="1" height="1" fill="#dadada"/></svg>
<div style="left:398px;top:708px;width:37px;height:14px;background:#606060;box-shadow:0 0 0 1px #484848"></div>
<div class="t" style="left:401px;top:705.19px;font-size:11px;color:#f0f0f0;font-weight:400;width:21px;overflow:hidden">0</div>
<svg style="left:427px;top:711px" width="5" height="8" shape-rendering="crispEdges"><rect x="2" y="0" width="1" height="1" fill="#dadada"/><rect x="1" y="1" width="3" height="1" fill="#dadada"/><rect x="0" y="2" width="5" height="1" fill="#dadada"/><rect x="0" y="5" width="5" height="1" fill="#dadada"/><rect x="1" y="6" width="3" height="1" fill="#dadada"/><rect x="2" y="7" width="1" height="1" fill="#dadada"/></svg>
<div style="left:438px;top:707px;width:15px;height:15px;background:#616161;border-radius:3px;box-shadow:0 0 0 1px #474747"></div>
<div class="t" style="left:438px;top:705.19px;font-size:11px;color:#f0f0f0;font-weight:400;width:15px;text-align:center;text-indent:0px">R</div>
<div style="left:456px;top:708px;width:37px;height:14px;background:#606060;box-shadow:0 0 0 1px #484848"></div>
<div class="t" style="left:459px;top:705.19px;font-size:11px;color:#f0f0f0;font-weight:400;width:21px;overflow:hidden">10</div>
<svg style="left:485px;top:711px" width="5" height="8" shape-rendering="crispEdges"><rect x="2" y="0" width="1" height="1" fill="#dadada"/><rect x="1" y="1" width="3" height="1" fill="#dadada"/><rect x="0" y="2" width="5" height="1" fill="#dadada"/><rect x="0" y="5" width="5" height="1" fill="#dadada"/><rect x="1" y="6" width="3" height="1" fill="#dadada"/><rect x="2" y="7" width="1" height="1" fill="#dadada"/></svg>
<div style="left:506px;top:708px;width:37px;height:14px;background:#606060;box-shadow:0 0 0 1px #484848"></div>
<div class="t" style="left:509px;top:705.19px;font-size:11px;color:#f0f0f0;font-weight:400;width:21px;overflow:hidden">0</div>
<svg style="left:535px;top:711px" width="5" height="8" shape-rendering="crispEdges"><rect x="2" y="0" width="1" height="1" fill="#dadada"/><rect x="1" y="1" width="3" height="1" fill="#dadada"/><rect x="0" y="2" width="5" height="1" fill="#dadada"/><rect x="0" y="5" width="5" height="1" fill="#dadada"/><rect x="1" y="6" width="3" height="1" fill="#dadada"/><rect x="2" y="7" width="1" height="1" fill="#dadada"/></svg>
<div style="left:546px;top:707px;width:10px;height:15px;background:#616161;border-radius:3px;box-shadow:0 0 0 1px #474747"></div>
<div class="t" style="left:546px;top:705.19px;font-size:11px;color:#f0f0f0;font-weight:400;width:10px;text-align:center;text-indent:0px">A</div>
<div style="left:572px;top:708px;width:37px;height:14px;background:#606060;box-shadow:0 0 0 1px #484848"></div>
<div class="t" style="left:575px;top:705.19px;font-size:11px;color:#f0f0f0;font-weight:400;width:21px;overflow:hidden">0</div>
<svg style="left:601px;top:711px" width="5" height="8" shape-rendering="crispEdges"><rect x="2" y="0" width="1" height="1" fill="#dadada"/><rect x="1" y="1" width="3" height="1" fill="#dadada"/><rect x="0" y="2" width="5" height="1" fill="#dadada"/><rect x="0" y="5" width="5" height="1" fill="#dadada"/><rect x="1" y="6" width="3" height="1" fill="#dadada"/><rect x="2" y="7" width="1" height="1" fill="#dadada"/></svg>
<div style="left:612px;top:707px;width:10px;height:15px;background:#616161;border-radius:3px;box-shadow:0 0 0 1px #474747"></div>
<div class="t" style="left:612px;top:705.19px;font-size:11px;color:#f0f0f0;font-weight:400;width:10px;text-align:center;text-indent:0px">A</div>
<div style="left:626px;top:708px;width:37px;height:14px;background:#606060;box-shadow:0 0 0 1px #484848"></div>
<div class="t" style="left:629px;top:705.19px;font-size:11px;color:#f0f0f0;font-weight:400;width:21px;overflow:hidden">0</div>
<svg style="left:655px;top:711px" width="5" height="8" shape-rendering="crispEdges"><rect x="2" y="0" width="1" height="1" fill="#dadada"/><rect x="1" y="1" width="3" height="1" fill="#dadada"/><rect x="0" y="2" width="5" height="1" fill="#dadada"/><rect x="0" y="5" width="5" height="1" fill="#dadada"/><rect x="1" y="6" width="3" height="1" fill="#dadada"/><rect x="2" y="7" width="1" height="1" fill="#dadada"/></svg>
<div style="left:680px;top:708px;width:37px;height:14px;background:#606060;box-shadow:0 0 0 1px #484848"></div>
<div class="t" style="left:683px;top:705.19px;font-size:11px;color:#f0f0f0;font-weight:400;width:21px;overflow:hidden">2.0</div>
<svg style="left:709px;top:711px" width="5" height="8" shape-rendering="crispEdges"><rect x="2" y="0" width="1" height="1" fill="#dadada"/><rect x="1" y="1" width="3" height="1" fill="#dadada"/><rect x="0" y="2" width="5" height="1" fill="#dadada"/><rect x="0" y="5" width="5" height="1" fill="#dadada"/><rect x="1" y="6" width="3" height="1" fill="#dadada"/><rect x="2" y="7" width="1" height="1" fill="#dadada"/></svg>
<div style="left:722px;top:707px;width:10px;height:15px;background:#616161;border-radius:3px;box-shadow:0 0 0 1px #474747"></div>
<div class="t" style="left:722px;top:705.19px;font-size:11px;color:#f0f0f0;font-weight:400;width:10px;text-align:center;text-indent:0px">M</div>
<div style="left:8px;top:282px;width:173px;height:98px;background:#3f3f3f"></div>
<div style="left:9px;top:283px;width:171px;height:96px;background:#4f4f4f"></div>
<div class="t" style="left:33.5px;top:285.19px;font-size:11px;color:#f0f0f0;font-weight:400;;letter-spacing:-0.4px">Close Rollup</div>
<div class="t" style="left:33.5px;top:308.19px;font-size:11px;color:#f0f0f0;font-weight:400;;letter-spacing:-0.3px">Close All</div>
<div class="t" style="left:33.5px;top:331.19px;font-size:11px;color:#f0f0f0;font-weight:400;;letter-spacing:-0.14px">Open All</div>
<div style="left:12px;top:354px;width:168px;height:1px;background:#5e5e5e"></div>
<div class="t" style="left:31px;top:356.19px;font-size:11px;color:#d6d6d6;font-weight:400;letter-spacing:0.7px">Add to favorite filter</div>
<svg style="left:182px;top:296px" width="20" height="30"><path d="M1.6 2.2 L1.6 22.5 L6.6 18.3 L10.6 27.3 L12.8 26.2 L8.9 17.4 L15.6 17.4 Z" fill="#fff" stroke="#000" stroke-width="0.9" stroke-linejoin="miter"/></svg>
</body></html>
